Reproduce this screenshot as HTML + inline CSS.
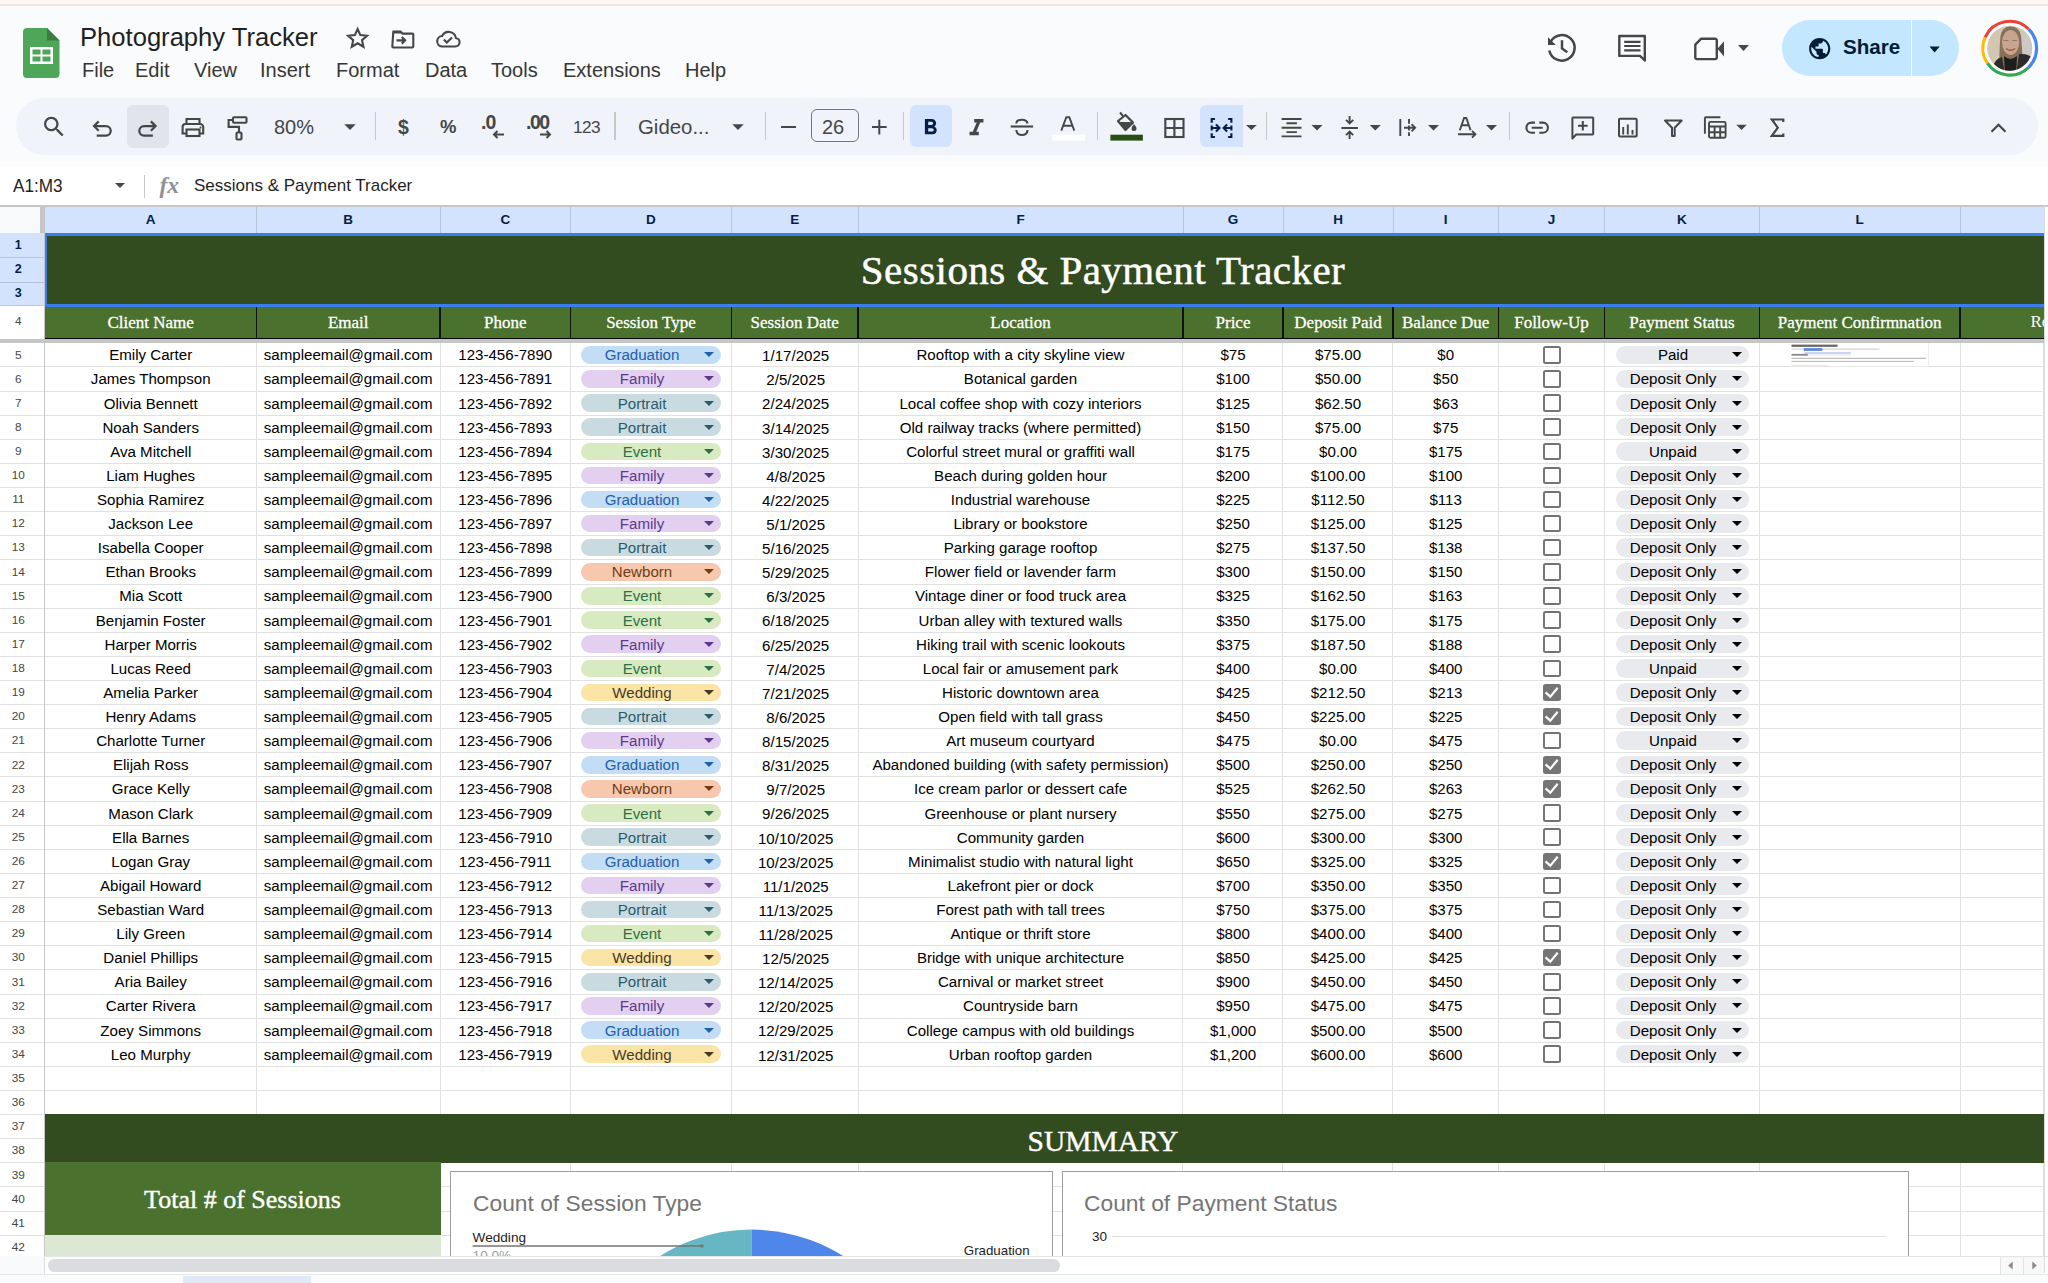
<!DOCTYPE html><html><head><meta charset="utf-8"><style>
*{margin:0;padding:0;box-sizing:border-box}
html,body{width:2048px;height:1283px;overflow:hidden;background:#f9fbfd;position:relative;font-family:"Liberation Sans",sans-serif}
.a{position:absolute}
.t{position:absolute;white-space:nowrap;line-height:1}
.c{position:absolute;white-space:nowrap;font-size:15.1px;color:#000;text-align:center;line-height:17px}
.g{position:absolute;background:#e1e1e1}
.chip{position:absolute;border-radius:9px;height:17.5px}
.arr{position:absolute;width:0;height:0;border-left:5px solid transparent;border-right:5px solid transparent;border-top:5px solid}
.ic{position:absolute}
</style></head><body>
<div class="a" style="left:0;top:0;width:2048px;height:4px;background:#fef7f3"></div>
<div class="a" style="left:0;top:4px;width:2048px;height:1.8px;background:#f4e2de"></div>
<svg class="ic" style="left:23px;top:28px" width="37" height="50" viewBox="0 0 37 50">
<path d="M4 0H24L36.5 12.5V46Q36.5 50 32.5 50H4Q0 50 0 46V4Q0 0 4 0Z" fill="#4ea758"/>
<path d="M24 0V12.5H36.5Z" fill="#3a7d43"/>
<rect x="7" y="19" width="23" height="17" fill="#fff"/>
<rect x="9.5" y="21.5" width="8" height="5" fill="#4ea758"/><rect x="19.5" y="21.5" width="8" height="5" fill="#4ea758"/>
<rect x="9.5" y="28.5" width="8" height="5" fill="#4ea758"/><rect x="19.5" y="28.5" width="8" height="5" fill="#4ea758"/>
</svg>
<div class="t" style="left:80px;top:25.4px;font-size:25.6px;color:#1f1f1f">Photography Tracker</div>
<svg class="ic" style="left:0;top:0" width="500" height="70" viewBox="0 0 500 70"><path d="M357.6 29l2.75 6.1 6.7.65-5.05 4.45 1.45 6.55-5.85-3.45-5.85 3.45 1.45-6.55-5.05-4.45 6.7-.65z" fill="none" stroke="#444746" stroke-width="2.1" stroke-linejoin="miter"/><path d="M393.3 31.6h7.2l2 2h9.8a1 1 0 0 1 1 1v11.9a1 1 0 0 1-1 1h-19a1 1 0 0 1-1-1z" fill="none" stroke="#444746" stroke-width="2.1" stroke-linejoin="round"/><path d="M393 31.6h7.5l2 2H393z" fill="#444746"/><path d="M396.5 40.3h8.5M401.8 37l3.3 3.3-3.3 3.3" fill="none" stroke="#444746" stroke-width="2.2"/><path d="M441.8 46.5h13.5a4.3 4.3 0 0 0 .6-8.55 7.3 7.3 0 0 0-13.8-1.9 5.25 5.25 0 0 0-.3 10.45z" fill="none" stroke="#444746" stroke-width="2.1"/><path d="M443.8 39.6l3 3 5.2-5.2" fill="none" stroke="#444746" stroke-width="2.1"/></svg>
<div class="t" style="left:82px;top:60px;font-size:20px;color:#363636">File</div>
<div class="t" style="left:135px;top:60px;font-size:20px;color:#363636">Edit</div>
<div class="t" style="left:194px;top:60px;font-size:20px;color:#363636">View</div>
<div class="t" style="left:260px;top:60px;font-size:20px;color:#363636">Insert</div>
<div class="t" style="left:336px;top:60px;font-size:20px;color:#363636">Format</div>
<div class="t" style="left:425px;top:60px;font-size:20px;color:#363636">Data</div>
<div class="t" style="left:491px;top:60px;font-size:20px;color:#363636">Tools</div>
<div class="t" style="left:563px;top:60px;font-size:20px;color:#363636">Extensions</div>
<div class="t" style="left:685px;top:60px;font-size:20px;color:#363636">Help</div>
<svg class="ic" style="left:0;top:0" width="2048" height="90" viewBox="0 0 2048 90"><g fill="none" stroke="#444746" stroke-width="2.5"><path d="M1550.7 41.5A12.8 12.8 0 1 1 1549.3 50.5"/><path d="M1562 40.2v8.2l5.3 3.9"/></g><path d="M1548 37.2l0 7.8 7.8 0z" fill="#444746"/><g fill="none" stroke="#444746" stroke-width="2.4" stroke-linejoin="round"><path d="M1619.3 36h25.5v24.5l-4.8-4.6h-20.7z"/></g><g stroke="#444746" stroke-width="2.2"><path d="M1624.2 41.9h16.3M1624.2 46h16.3M1624.2 50.3h16.3"/></g><path d="M1701 38.8h14.3a1.5 1.5 0 0 1 1.5 1.5v17.3a1.5 1.5 0 0 1-1.5 1.5h-18.5a1.5 1.5 0 0 1-1.5-1.5v-13z" fill="none" stroke="#444746" stroke-width="2.4" stroke-linejoin="round"/><path d="M1717.5 48.8l6.5-7.6v15.3z" fill="#444746"/><path d="M1738 44.9h11l-5.5 6z" fill="#444746"/></svg>
<div class="a" style="left:1782px;top:19.8px;width:177px;height:56.7px;border-radius:28.4px;background:#c2e7ff"></div>
<div class="a" style="left:1910.5px;top:19.8px;width:1.5px;height:56.7px;background:#f9fbfd"></div>
<svg class="ic" style="left:1806.5px;top:35.5px" width="25.4" height="25.4" viewBox="0 0 24 24"><path d="M12 2C6.48 2 2 6.48 2 12s4.48 10 10 10 10-4.48 10-10S17.52 2 12 2zm-1 17.93c-3.950-.49-7-3.85-7-7.93 0-.62.08-1.21.21-1.79L9 15v1c0 1.1.9 2 2 2v1.93zm6.9-2.54c-.26-.81-1-1.390-1.9-1.39h-1v-3c0-.55-.45-1-1-1H8v-2h2c.55 0 1-.45 1-1V7h2c1.1 0 2-.9 2-2v-.41c2.93 1.19 5 4.06 5 7.41 0 2.08-.8 3.97-2.1 5.39z" fill="#001d35"/></svg>
<div class="t" style="left:1843px;top:36.8px;font-size:20.6px;font-weight:bold;color:#001d35">Share</div>
<svg class="ic" style="left:0;top:0" width="2048" height="90" viewBox="0 0 2048 90"><path d="M1929.5 46.4h10.2l-5.1 6z" fill="#001d35"/><path d="M1985.13 37.26A26.9 26.9 0 0 1 2028.72 29.18" fill="none" stroke="#ea4335" stroke-width="3.1"/><path d="M2028.72 29.18A26.9 26.9 0 0 1 2028.39 67.55" fill="none" stroke="#4285f4" stroke-width="3.1"/><path d="M2028.39 67.55A26.9 26.9 0 0 1 1987.40 63.24" fill="none" stroke="#34a853" stroke-width="3.1"/><path d="M1987.40 63.24A26.9 26.9 0 0 1 1985.13 37.26" fill="none" stroke="#fbbc04" stroke-width="3.1"/><clipPath id="av"><circle cx="2009.7" cy="48.2" r="22.45"/></clipPath><g clip-path="url(#av)"><rect x="1985" y="24" width="50" height="50" fill="#d3c6b3"/><rect x="2022" y="24" width="14" height="50" fill="#cdc8c1"/><path d="M1999.5 72 Q1999 50 2000.5 36 Q2002 26.5 2010.5 26.5 Q2019.5 26.5 2021 36 Q2022.8 52 2022.5 72z" fill="#87705a"/><path d="M1990 75 Q1993 59 2002 57 L2005 75z" fill="#2b2b2b"/><path d="M2016 75 L2019 54 Q2030 53 2034 60 L2034 75z" fill="#2b2b2b"/><path d="M2004 56 Q2010.5 62 2017 56 L2016 75 H2005z" fill="#1d1d1d"/><ellipse cx="2010.6" cy="42.5" rx="8.6" ry="12.5" fill="#c9a48e"/><path d="M2003.5 40.5h5M2012 40.5h5" stroke="#8d7a6a" stroke-width="1"/><path d="M2006 48.5q4.6 3.5 9.2 0" stroke="#9b5e48" stroke-width="1.3" fill="none"/></g></svg>
<div class="a" style="left:16px;top:98px;width:2022px;height:57px;border-radius:28.5px;background:#f0f3f9"></div>
<div class="a" style="left:126.5px;top:105px;width:42.5px;height:42.5px;border-radius:6px;background:#e1e4ea"></div>
<div class="a" style="left:909.9px;top:105px;width:42.4px;height:42.3px;border-radius:6px;background:#d3e3fd"></div>
<div class="a" style="left:1200.4px;top:105px;width:42.8px;height:42.3px;border-radius:6px 0 0 6px;background:#d3e3fd"></div>
<div class="a" style="left:374.8px;top:112.3px;width:1.4px;height:27.5px;background:#c7c7c7"></div>
<div class="a" style="left:614.3px;top:112.3px;width:1.4px;height:27.5px;background:#c7c7c7"></div>
<div class="a" style="left:764.8px;top:112.3px;width:1.4px;height:27.5px;background:#c7c7c7"></div>
<div class="a" style="left:902.8px;top:112.3px;width:1.4px;height:27.5px;background:#c7c7c7"></div>
<div class="a" style="left:1097.1px;top:112.3px;width:1.4px;height:27.5px;background:#c7c7c7"></div>
<div class="a" style="left:1265.9px;top:112.3px;width:1.4px;height:27.5px;background:#c7c7c7"></div>
<div class="a" style="left:1508.8px;top:112.3px;width:1.4px;height:27.5px;background:#c7c7c7"></div>
<svg class="ic" style="left:0;top:0" width="2048" height="166" viewBox="0 0 2048 166"><path transform="translate(40.71 113.51) scale(1.114)" d="M15.5 14h-.79l-.28-.27C15.41 12.59 16 11.11 16 9.5 16 5.91 13.09 3 9.5 3S3 5.91 3 9.5 5.91 16 9.5 16c1.61 0 3.09-.59 4.23-1.57l.27.28v.79l5 4.99L20.49 19l-4.99-5zm-6 0C7.01 14 5 11.99 5 9.5S7.01 5 9.5 5 14 7.01 14 9.5 11.99 14 9.5 14z" fill="#444746"/><g fill="none" stroke="#444746" stroke-width="2.2"><path d="M98.7 121.4l-4.7 4.7 4.7 4.7"/><path d="M94.6 126.1H106a4.75 4.75 0 0 1 0 9.5h-9.3"/></g><g fill="none" stroke="#444746" stroke-width="2.2"><path d="M150.9 121.4l4.7 4.7-4.7 4.7"/><path d="M155 126.1H144.05a4.75 4.75 0 0 0 0 9.5h8.85"/></g><g fill="none" stroke="#444746" stroke-width="2.1"><path d="M186.5 123.5v-4.5h13v4.5"/><path d="M186.2 133.5h-3.6v-6.5a3 3 0 0 1 3-3h14.6a3 3 0 0 1 3 3v6.5h-3.6"/><rect x="186.5" y="129.5" width="13" height="6.5"/></g><circle cx="200.5" cy="127.5" r="1" fill="#444746"/><g fill="none" stroke="#444746" stroke-width="2.1"><rect x="233" y="117.3" width="13.5" height="5.5" rx="1"/><path d="M233 120H228.6v6.9h10.4v5.4"/><rect x="236.5" y="132.5" width="5" height="7" rx="1"/></g><path d="M344.25 124.3h11.5l-5.75 5.8z" fill="#444746"/><g fill="none" stroke="#444746" stroke-width="2"><path d="M504 134.5h-10M497.5 131l-3.5 3.5 3.5 3.5"/></g><g fill="none" stroke="#444746" stroke-width="2"><path d="M540 134.5h10M546.5 131l3.5 3.5-3.5 3.5"/></g><path d="M732.25 124.3h11.5l-5.75 5.8z" fill="#444746"/><path d="M781 127h15" stroke="#444746" stroke-width="2"/><path d="M872 127h14.7M879.3 119.7v14.7" stroke="#444746" stroke-width="2"/><path transform="translate(917.19 114.55) scale(1.1)" d="M15.6 10.79c.97-.67 1.65-1.77 1.65-2.79 0-2.26-1.75-4-4-4H7v14h7.04c2.09 0 3.71-1.7 3.71-3.79 0-1.52-.86-2.82-2.15-3.42zM10 6.5h3c.83 0 1.5.67 1.5 1.5s-.67 1.5-1.5 1.5h-3v-3zm3.5 9H10v-3h3.5c.83 0 1.5.67 1.5 1.5s-.67 1.5-1.5 1.5z" fill="#041e49"/><path transform="translate(962.58 114.34) scale(1.16)" d="M10 4v3h2.21l-3.42 8H6v3h8v-3h-2.21l3.42-8H18V4z" fill="#444746"/><g fill="none" stroke="#444746" stroke-width="2.1"><path d="M1010.7 126.5h22.4"/><path d="M1027.5 123.5q-.5-3.7-5.6-3.7-5.6 0-5.6 3.7"/><path d="M1016.3 130q.3 5 5.6 5 5.4 0 5.6-5"/></g><path d="M1061.3 130.7l5-13.5h3l5 13.5M1063.3 125.8h9" fill="none" stroke="#444746" stroke-width="1.9"/><rect x="1052.2" y="134.7" width="32.9" height="5.9" fill="#fff"/><g transform="translate(1115.5 111.5)"><path d="M4.5 1l3 3.5" stroke="#444746" stroke-width="2" fill="none"/><path d="M2.5 9.5l7.5-6 7.5 7.5-7.5 7.5z" fill="none" stroke="#444746" stroke-width="2.2" stroke-linejoin="round"/><path d="M3 10.5h14l-7 7z" fill="#444746"/><path d="M18.5 12.5q2.5 3 2.5 4.5a2.5 2.5 0 0 1-5 0q0-1.5 2.5-4.5z" fill="#444746"/></g><rect x="1110.4" y="134.7" width="32.5" height="5.9" fill="#274e13"/><g fill="none" stroke="#444746" stroke-width="2.1"><rect x="1165.3" y="119" width="18.2" height="18"/><path d="M1174.4 119v18M1165.3 128h18.2"/></g><g fill="none" stroke="#041e49" stroke-width="2.1"><path d="M1215 119h-3.3v3.8M1211.7 133.2v3.8h3.3M1228.1 119h3.3v3.8M1231.4 133.2v3.8h-3.3"/><path d="M1211.7 128h7.5M1216 124.5l3.5 3.5-3.5 3.5M1231.4 128h-7.5M1227.1 124.5l-3.5 3.5 3.5 3.5"/><path d="M1211.7 125.5v5M1231.4 125.5v5"/></g><path d="M1246 124.9h10.8l-5.4 5.2z" fill="#444746"/><g stroke="#444746" stroke-width="1.9"><path d="M1281.6 119h19.9M1286.5 123.2h10.4M1281.6 127.8h19.9M1286.5 132.1h10.4M1281.6 136.4h19.9"/></g><path d="M1311.5 124.95h11l-5.5 5.5z" fill="#444746"/><g fill="none" stroke="#444746" stroke-width="1.9"><path d="M1341.4 128h16.5M1349.6 115.9v7.5M1346 119.8l3.6 3.6 3.6-3.6M1349.6 139v-7.5M1346 135.1l3.6-3.6 3.6 3.6"/></g><path d="M1369.8 124.95h11l-5.5 5.5z" fill="#444746"/><g fill="none" stroke="#444746" stroke-width="1.9"><path d="M1400.3 118.9v17.1M1409 118.9v4.8M1409 125.5v5M1409 132.3v3.7M1404 127.8h11M1411.5 124.2l3.6 3.6-3.6 3.6"/></g><path d="M1428 124.95h11l-5.5 5.5z" fill="#444746"/><g fill="none" stroke="#444746" stroke-width="1.9"><path d="M1459.8 130.2l4.3-12.2h2.2l4.3 12.2M1461.6 125.3h7.4M1458 134.2h17M1472 130.8l3.4 3.4-3.4 3.4"/></g><path d="M1486 124.95h11l-5.5 5.5z" fill="#444746"/><g fill="none" stroke="#444746" stroke-width="2.1"><path d="M1535 122.6h-3.5a5.1 5.1 0 0 0 0 10.2h3.5M1539.3 122.6h3.5a5.1 5.1 0 0 1 0 10.2h-3.5M1531.7 127.7h11"/></g><g fill="none" stroke="#444746" stroke-width="2"><path d="M1572.4 138.5V118.2a.7.7 0 0 1 .7-.7h19.4a.7.7 0 0 1 .7.7v15.6a.7.7 0 0 1-.7.7h-16.3z" stroke-linejoin="round"/><path d="M1582.8 121v9.6M1578 125.8h9.6"/></g><g fill="none" stroke="#444746" stroke-width="2"><rect x="1619" y="118.8" width="17.7" height="17.8" rx="1"/></g><g stroke="#444746" stroke-width="1.9"><path d="M1623.2 134.5v-7.5M1627.8 134.5v-10M1632.5 134.5v-4.5"/></g><g fill="none" stroke="#444746" stroke-width="2"><path d="M1665 120.5h16.7l-7 7.3v8.1h-2.7v-8.1z" stroke-linejoin="round"/></g><g fill="none" stroke="#444746" stroke-width="1.9"><path d="M1704.9 133.8v-15.5a1 1 0 0 1 1-1h14.5"/><rect x="1709" y="121.9" width="16.6" height="15.9" rx="1.5"/><path d="M1709 126.5h16.6M1709 132.2h16.6M1714.6 126.5v11.3M1720.2 126.5v11.3"/></g><path d="M1736.3 124.85h10.4l-5.2 5.1z" fill="#444746"/><path d="M1783.3 122v-2.5h-11.5l6 8.2-6 8.2h11.5v-2.5" fill="none" stroke="#444746" stroke-width="2.2"/><path d="M1991.5 131.7l7-7 7 7" fill="none" stroke="#444746" stroke-width="2.2"/></svg>
<div class="t" style="left:274px;top:117px;font-size:20px;color:#444746">80%</div>
<div class="t" style="left:398px;top:117.5px;font-size:19.5px;font-weight:bold;color:#444746">$</div>
<div class="t" style="left:440px;top:118px;font-size:18.5px;font-weight:bold;color:#444746">%</div>
<div class="t" style="left:481px;top:112.5px;font-size:19.5px;font-weight:bold;color:#444746;letter-spacing:-1px">.0</div>
<div class="t" style="left:526px;top:112.5px;font-size:19.5px;font-weight:bold;color:#444746;letter-spacing:-1.5px">.00</div>
<div class="t" style="left:573px;top:118.5px;font-size:17.2px;color:#444746;letter-spacing:-.5px">123</div>
<div class="t" style="left:638px;top:116.5px;font-size:20.4px;color:#444746">Gideo...</div>
<div class="a" style="left:810.5px;top:109.3px;width:48px;height:33.2px;border:1.5px solid #747775;border-radius:6px"></div>
<div class="t" style="left:822px;top:117px;font-size:20px;color:#444746">26</div>
<div class="a" style="left:0;top:166px;width:2048px;height:40px;background:#fff"></div>
<div class="t" style="left:13px;top:177.5px;font-size:17.2px;color:#1f1f1f;transform:scaleY(1.06);transform-origin:0 100%">A1:M3</div>
<div class="arr" style="left:115px;top:183px;border-top-color:#444746;border-left-width:5.5px;border-right-width:5.5px;border-top-width:5.5px"></div>
<div class="a" style="left:143.5px;top:175px;width:1.5px;height:23px;background:#c7c7c7"></div>
<div class="t" style="left:159.5px;top:174px;font-size:23.5px;font-style:italic;font-weight:bold;color:#8e9196;font-family:Liberation Serif">fx</div>
<div class="t" style="left:194px;top:176.5px;font-size:17px;color:#1f1f1f">Sessions &amp; Payment Tracker</div>
<div class="a" style="left:0;top:206px;width:2048px;height:1050px;background:#fff"></div>
<div class="a" style="left:0;top:205px;width:2048px;height:1.5px;background:#c7c7c7"></div>
<div class="a" style="left:45px;top:206.5px;width:1998.6px;height:26.8px;background:#d3e3fd"></div>
<div class="a" style="left:0;top:206.5px;width:40px;height:26.8px;background:#f8f9fa"></div>
<div class="a" style="left:40px;top:206.5px;width:5px;height:26.8px;background:#c4c7c5"></div>
<div class="a" style="left:0;top:233.3px;width:44px;height:72px;background:#d3e3fd"></div>
<div class="t" style="left:45px;top:213px;width:211.4px;text-align:center;font-size:13.5px;font-weight:bold;color:#041e49">A</div>
<div class="a" style="left:255.9px;top:206.5px;width:1px;height:27px;background:#b7c4d9"></div>
<div class="t" style="left:256.4px;top:213px;width:183.6px;text-align:center;font-size:13.5px;font-weight:bold;color:#041e49">B</div>
<div class="a" style="left:439.5px;top:206.5px;width:1px;height:27px;background:#b7c4d9"></div>
<div class="t" style="left:440px;top:213px;width:130.5px;text-align:center;font-size:13.5px;font-weight:bold;color:#041e49">C</div>
<div class="a" style="left:570px;top:206.5px;width:1px;height:27px;background:#b7c4d9"></div>
<div class="t" style="left:570.5px;top:213px;width:160.9px;text-align:center;font-size:13.5px;font-weight:bold;color:#041e49">D</div>
<div class="a" style="left:730.9px;top:206.5px;width:1px;height:27px;background:#b7c4d9"></div>
<div class="t" style="left:731.4px;top:213px;width:126.6px;text-align:center;font-size:13.5px;font-weight:bold;color:#041e49">E</div>
<div class="a" style="left:857.5px;top:206.5px;width:1px;height:27px;background:#b7c4d9"></div>
<div class="t" style="left:858px;top:213px;width:325px;text-align:center;font-size:13.5px;font-weight:bold;color:#041e49">F</div>
<div class="a" style="left:1182.5px;top:206.5px;width:1px;height:27px;background:#b7c4d9"></div>
<div class="t" style="left:1183px;top:213px;width:100px;text-align:center;font-size:13.5px;font-weight:bold;color:#041e49">G</div>
<div class="a" style="left:1282.5px;top:206.5px;width:1px;height:27px;background:#b7c4d9"></div>
<div class="t" style="left:1283px;top:213px;width:110px;text-align:center;font-size:13.5px;font-weight:bold;color:#041e49">H</div>
<div class="a" style="left:1392.5px;top:206.5px;width:1px;height:27px;background:#b7c4d9"></div>
<div class="t" style="left:1393px;top:213px;width:105.4px;text-align:center;font-size:13.5px;font-weight:bold;color:#041e49">I</div>
<div class="a" style="left:1497.9px;top:206.5px;width:1px;height:27px;background:#b7c4d9"></div>
<div class="t" style="left:1498.4px;top:213px;width:106.2px;text-align:center;font-size:13.5px;font-weight:bold;color:#041e49">J</div>
<div class="a" style="left:1604.1px;top:206.5px;width:1px;height:27px;background:#b7c4d9"></div>
<div class="t" style="left:1604.6px;top:213px;width:154.8px;text-align:center;font-size:13.5px;font-weight:bold;color:#041e49">K</div>
<div class="a" style="left:1758.9px;top:206.5px;width:1px;height:27px;background:#b7c4d9"></div>
<div class="t" style="left:1759.4px;top:213px;width:200.6px;text-align:center;font-size:13.5px;font-weight:bold;color:#041e49">L</div>
<div class="a" style="left:1959.5px;top:206.5px;width:1px;height:27px;background:#b7c4d9"></div>
<div class="g" style="left:256px;top:343px;width:1px;height:913px"></div>
<div class="g" style="left:440px;top:343px;width:1px;height:913px"></div>
<div class="g" style="left:570px;top:343px;width:1px;height:913px"></div>
<div class="g" style="left:731px;top:343px;width:1px;height:913px"></div>
<div class="g" style="left:858px;top:343px;width:1px;height:913px"></div>
<div class="g" style="left:1182px;top:343px;width:1px;height:913px"></div>
<div class="g" style="left:1282px;top:343px;width:1px;height:913px"></div>
<div class="g" style="left:1392px;top:343px;width:1px;height:913px"></div>
<div class="g" style="left:1498px;top:343px;width:1px;height:913px"></div>
<div class="g" style="left:1604px;top:343px;width:1px;height:913px"></div>
<div class="g" style="left:1759px;top:343px;width:1px;height:913px"></div>
<div class="g" style="left:1960px;top:343px;width:1px;height:913px"></div>
<div class="g" style="left:2043px;top:343px;width:1px;height:913px"></div>
<div class="g" style="left:0;top:366px;width:2044px;height:1px"></div>
<div class="g" style="left:0;top:391px;width:2044px;height:1px"></div>
<div class="g" style="left:0;top:415px;width:2044px;height:1px"></div>
<div class="g" style="left:0;top:439px;width:2044px;height:1px"></div>
<div class="g" style="left:0;top:463px;width:2044px;height:1px"></div>
<div class="g" style="left:0;top:487px;width:2044px;height:1px"></div>
<div class="g" style="left:0;top:511px;width:2044px;height:1px"></div>
<div class="g" style="left:0;top:535px;width:2044px;height:1px"></div>
<div class="g" style="left:0;top:559px;width:2044px;height:1px"></div>
<div class="g" style="left:0;top:584px;width:2044px;height:1px"></div>
<div class="g" style="left:0;top:608px;width:2044px;height:1px"></div>
<div class="g" style="left:0;top:632px;width:2044px;height:1px"></div>
<div class="g" style="left:0;top:656px;width:2044px;height:1px"></div>
<div class="g" style="left:0;top:680px;width:2044px;height:1px"></div>
<div class="g" style="left:0;top:704px;width:2044px;height:1px"></div>
<div class="g" style="left:0;top:728px;width:2044px;height:1px"></div>
<div class="g" style="left:0;top:752px;width:2044px;height:1px"></div>
<div class="g" style="left:0;top:776px;width:2044px;height:1px"></div>
<div class="g" style="left:0;top:801px;width:2044px;height:1px"></div>
<div class="g" style="left:0;top:825px;width:2044px;height:1px"></div>
<div class="g" style="left:0;top:849px;width:2044px;height:1px"></div>
<div class="g" style="left:0;top:873px;width:2044px;height:1px"></div>
<div class="g" style="left:0;top:897px;width:2044px;height:1px"></div>
<div class="g" style="left:0;top:921px;width:2044px;height:1px"></div>
<div class="g" style="left:0;top:945px;width:2044px;height:1px"></div>
<div class="g" style="left:0;top:969px;width:2044px;height:1px"></div>
<div class="g" style="left:0;top:994px;width:2044px;height:1px"></div>
<div class="g" style="left:0;top:1018px;width:2044px;height:1px"></div>
<div class="g" style="left:0;top:1042px;width:2044px;height:1px"></div>
<div class="g" style="left:0;top:1066px;width:2044px;height:1px"></div>
<div class="g" style="left:0;top:1090px;width:2044px;height:1px"></div>
<div class="g" style="left:0;top:1114px;width:2044px;height:1px"></div>
<div class="g" style="left:0;top:1138px;width:2044px;height:1px"></div>
<div class="g" style="left:0;top:1162px;width:2044px;height:1px"></div>
<div class="g" style="left:0;top:1186px;width:2044px;height:1px"></div>
<div class="g" style="left:0;top:1211px;width:2044px;height:1px"></div>
<div class="g" style="left:0;top:1235px;width:2044px;height:1px"></div>
<div class="g" style="left:0;top:1259px;width:2044px;height:1px"></div>
<div class="a" style="left:44px;top:233px;width:1.2px;height:1040px;background:#c7c7c7"></div>
<div class="a" style="left:0;top:257.4px;width:44px;height:1px;background:#b7c4d9"></div>
<div class="a" style="left:0;top:281.5px;width:44px;height:1px;background:#b7c4d9"></div>
<div class="a" style="left:0;top:305.2px;width:44px;height:1.2px;background:#c7c7c7"></div>
<div class="a" style="left:0;top:338.9px;width:2044px;height:4.4px;background:#c4c7c5"></div>
<div class="a" style="left:45px;top:233px;width:1999px;height:74px;background:#324b1f"></div>
<div class="a" style="left:45.2px;top:232.7px;width:1999px;height:74.2px;border:3px solid #3b7ded;border-left-width:2px;border-right:none"></div>
<div class="t" style="left:45px;top:248px;width:2116px;text-align:center;font-family:'Liberation Serif',serif;font-size:41px;color:#fff;margin-top:2px;letter-spacing:0.45px;-webkit-text-stroke:0.5px #fff">Sessions &amp; Payment Tracker</div>
<div class="a" style="left:45px;top:306.9px;width:1999px;height:31px;background:#4a712d"></div>
<div class="a" style="left:45px;top:337.7px;width:1999px;height:1.3px;background:#000"></div>
<div class="t" style="left:45px;top:314px;width:211.4px;text-align:center;font-family:'Liberation Serif',serif;font-size:17px;color:#fff;-webkit-text-stroke:0.3px #fff">Client Name</div>
<div class="a" style="left:255.65px;top:306.9px;width:1.5px;height:31px;background:#111"></div>
<div class="t" style="left:256.4px;top:314px;width:183.6px;text-align:center;font-family:'Liberation Serif',serif;font-size:17px;color:#fff;-webkit-text-stroke:0.3px #fff">Email</div>
<div class="a" style="left:439.25px;top:306.9px;width:1.5px;height:31px;background:#111"></div>
<div class="t" style="left:440px;top:314px;width:130.5px;text-align:center;font-family:'Liberation Serif',serif;font-size:17px;color:#fff;-webkit-text-stroke:0.3px #fff">Phone</div>
<div class="a" style="left:569.75px;top:306.9px;width:1.5px;height:31px;background:#111"></div>
<div class="t" style="left:570.5px;top:314px;width:160.9px;text-align:center;font-family:'Liberation Serif',serif;font-size:17px;color:#fff;-webkit-text-stroke:0.3px #fff">Session Type</div>
<div class="a" style="left:730.65px;top:306.9px;width:1.5px;height:31px;background:#111"></div>
<div class="t" style="left:731.4px;top:314px;width:126.6px;text-align:center;font-family:'Liberation Serif',serif;font-size:17px;color:#fff;-webkit-text-stroke:0.3px #fff">Session Date</div>
<div class="a" style="left:857.25px;top:306.9px;width:1.5px;height:31px;background:#111"></div>
<div class="t" style="left:858px;top:314px;width:325px;text-align:center;font-family:'Liberation Serif',serif;font-size:17px;color:#fff;-webkit-text-stroke:0.3px #fff">Location</div>
<div class="a" style="left:1182.25px;top:306.9px;width:1.5px;height:31px;background:#111"></div>
<div class="t" style="left:1183px;top:314px;width:100px;text-align:center;font-family:'Liberation Serif',serif;font-size:17px;color:#fff;-webkit-text-stroke:0.3px #fff">Price</div>
<div class="a" style="left:1282.25px;top:306.9px;width:1.5px;height:31px;background:#111"></div>
<div class="t" style="left:1283px;top:314px;width:110px;text-align:center;font-family:'Liberation Serif',serif;font-size:17px;color:#fff;-webkit-text-stroke:0.3px #fff">Deposit Paid</div>
<div class="a" style="left:1392.25px;top:306.9px;width:1.5px;height:31px;background:#111"></div>
<div class="t" style="left:1393px;top:314px;width:105.4px;text-align:center;font-family:'Liberation Serif',serif;font-size:17px;color:#fff;-webkit-text-stroke:0.3px #fff">Balance Due</div>
<div class="a" style="left:1497.65px;top:306.9px;width:1.5px;height:31px;background:#111"></div>
<div class="t" style="left:1498.4px;top:314px;width:106.2px;text-align:center;font-family:'Liberation Serif',serif;font-size:17px;color:#fff;-webkit-text-stroke:0.3px #fff">Follow-Up</div>
<div class="a" style="left:1603.85px;top:306.9px;width:1.5px;height:31px;background:#111"></div>
<div class="t" style="left:1604.6px;top:314px;width:154.8px;text-align:center;font-family:'Liberation Serif',serif;font-size:17px;color:#fff;-webkit-text-stroke:0.3px #fff">Payment Status</div>
<div class="a" style="left:1758.65px;top:306.9px;width:1.5px;height:31px;background:#111"></div>
<div class="t" style="left:1759.4px;top:314px;width:200.6px;text-align:center;font-family:'Liberation Serif',serif;font-size:17px;color:#fff;-webkit-text-stroke:0.3px #fff">Payment Confirmnation</div>
<div class="a" style="left:1959.25px;top:306.9px;width:1.5px;height:31px;background:#111"></div>
<div class="a" style="left:1960px;top:305.5px;width:84px;height:32.6px;overflow:hidden"><div class="t" style="left:70.5px;top:7px;font-family:'Liberation Serif',serif;font-size:17px;color:#fff">Receipt</div></div>
<div class="t" style="left:0;top:239.05px;width:36.5px;text-align:center;font-size:12.5px;font-weight:bold;color:#041e49">1</div>
<div class="t" style="left:0;top:263.15px;width:36.5px;text-align:center;font-size:12.5px;font-weight:bold;color:#041e49">2</div>
<div class="t" style="left:0;top:287.05px;width:36.5px;text-align:center;font-size:12.5px;font-weight:bold;color:#041e49">3</div>
<div class="t" style="left:0;top:316.25px;width:36.5px;text-align:center;font-size:11.8px;color:#444746">4</div>
<div class="t" style="left:0;top:349.6px;width:36.5px;text-align:center;font-size:11.8px;color:#444746">5</div>
<div class="t" style="left:0;top:373.66px;width:36.5px;text-align:center;font-size:11.8px;color:#444746">6</div>
<div class="t" style="left:0;top:397.78px;width:36.5px;text-align:center;font-size:11.8px;color:#444746">7</div>
<div class="t" style="left:0;top:421.89px;width:36.5px;text-align:center;font-size:11.8px;color:#444746">8</div>
<div class="t" style="left:0;top:446.01px;width:36.5px;text-align:center;font-size:11.8px;color:#444746">9</div>
<div class="t" style="left:0;top:470.13px;width:36.5px;text-align:center;font-size:11.8px;color:#444746">10</div>
<div class="t" style="left:0;top:494.24px;width:36.5px;text-align:center;font-size:11.8px;color:#444746">11</div>
<div class="t" style="left:0;top:518.36px;width:36.5px;text-align:center;font-size:11.8px;color:#444746">12</div>
<div class="t" style="left:0;top:542.48px;width:36.5px;text-align:center;font-size:11.8px;color:#444746">13</div>
<div class="t" style="left:0;top:566.59px;width:36.5px;text-align:center;font-size:11.8px;color:#444746">14</div>
<div class="t" style="left:0;top:590.71px;width:36.5px;text-align:center;font-size:11.8px;color:#444746">15</div>
<div class="t" style="left:0;top:614.83px;width:36.5px;text-align:center;font-size:11.8px;color:#444746">16</div>
<div class="t" style="left:0;top:638.95px;width:36.5px;text-align:center;font-size:11.8px;color:#444746">17</div>
<div class="t" style="left:0;top:663.06px;width:36.5px;text-align:center;font-size:11.8px;color:#444746">18</div>
<div class="t" style="left:0;top:687.18px;width:36.5px;text-align:center;font-size:11.8px;color:#444746">19</div>
<div class="t" style="left:0;top:711.3px;width:36.5px;text-align:center;font-size:11.8px;color:#444746">20</div>
<div class="t" style="left:0;top:735.41px;width:36.5px;text-align:center;font-size:11.8px;color:#444746">21</div>
<div class="t" style="left:0;top:759.53px;width:36.5px;text-align:center;font-size:11.8px;color:#444746">22</div>
<div class="t" style="left:0;top:783.65px;width:36.5px;text-align:center;font-size:11.8px;color:#444746">23</div>
<div class="t" style="left:0;top:807.76px;width:36.5px;text-align:center;font-size:11.8px;color:#444746">24</div>
<div class="t" style="left:0;top:831.88px;width:36.5px;text-align:center;font-size:11.8px;color:#444746">25</div>
<div class="t" style="left:0;top:856px;width:36.5px;text-align:center;font-size:11.8px;color:#444746">26</div>
<div class="t" style="left:0;top:880.12px;width:36.5px;text-align:center;font-size:11.8px;color:#444746">27</div>
<div class="t" style="left:0;top:904.23px;width:36.5px;text-align:center;font-size:11.8px;color:#444746">28</div>
<div class="t" style="left:0;top:928.35px;width:36.5px;text-align:center;font-size:11.8px;color:#444746">29</div>
<div class="t" style="left:0;top:952.47px;width:36.5px;text-align:center;font-size:11.8px;color:#444746">30</div>
<div class="t" style="left:0;top:976.58px;width:36.5px;text-align:center;font-size:11.8px;color:#444746">31</div>
<div class="t" style="left:0;top:1000.7px;width:36.5px;text-align:center;font-size:11.8px;color:#444746">32</div>
<div class="t" style="left:0;top:1024.82px;width:36.5px;text-align:center;font-size:11.8px;color:#444746">33</div>
<div class="t" style="left:0;top:1048.93px;width:36.5px;text-align:center;font-size:11.8px;color:#444746">34</div>
<div class="t" style="left:0;top:1073.05px;width:36.5px;text-align:center;font-size:11.8px;color:#444746">35</div>
<div class="t" style="left:0;top:1097.17px;width:36.5px;text-align:center;font-size:11.8px;color:#444746">36</div>
<div class="t" style="left:0;top:1121.29px;width:36.5px;text-align:center;font-size:11.8px;color:#444746">37</div>
<div class="t" style="left:0;top:1145.4px;width:36.5px;text-align:center;font-size:11.8px;color:#444746">38</div>
<div class="t" style="left:0;top:1169.52px;width:36.5px;text-align:center;font-size:11.8px;color:#444746">39</div>
<div class="t" style="left:0;top:1193.64px;width:36.5px;text-align:center;font-size:11.8px;color:#444746">40</div>
<div class="t" style="left:0;top:1217.75px;width:36.5px;text-align:center;font-size:11.8px;color:#444746">41</div>
<div class="t" style="left:0;top:1241.87px;width:36.5px;text-align:center;font-size:11.8px;color:#444746">42</div>
<div class="c" style="left:45px;top:346.3px;width:211.4px;color:#000">Emily Carter</div>
<div class="c" style="left:256.4px;top:346.3px;width:183.6px;color:#000">sampleemail@gmail.com</div>
<div class="c" style="left:440px;top:346.3px;width:130.5px;color:#000">123-456-7890</div>
<div class="chip" style="left:581px;top:346.05px;width:140px;background:#c2ddf4"></div>
<div class="c" style="left:581px;top:346.3px;width:122px;color:#2160ad">Graduation</div>
<div class="arr" style="left:704px;top:352.3px;border-top-color:#2160ad;border-left-width:5px;border-right-width:5px;border-top-width:5px"></div>
<div class="c" style="left:732.4px;top:347.2px;width:126.6px;color:#000">1/17/2025</div>
<div class="c" style="left:858px;top:346.3px;width:325px;color:#000">Rooftop with a city skyline view</div>
<div class="c" style="left:1183px;top:346.3px;width:100px;color:#000">$75</div>
<div class="c" style="left:1283px;top:346.3px;width:110px;color:#000">$75.00</div>
<div class="c" style="left:1393px;top:346.3px;width:105.4px;color:#000">$0</div>
<div class="a" style="left:1543px;top:346.05px;width:17.5px;height:17.5px;border-radius:2.5px;border:2px solid #747474"></div>
<div class="chip" style="left:1616px;top:345.55px;width:133px;height:18.5px;border-radius:9.25px;background:#e8eaed"></div>
<div class="c" style="left:1616px;top:346.3px;width:114px;color:#000">Paid</div>
<div class="arr" style="left:1731.5px;top:352.3px;border-top-color:#000;border-left-width:5px;border-right-width:5px;border-top-width:5px"></div>
<div class="c" style="left:45px;top:370.42px;width:211.4px;color:#000">James Thompson</div>
<div class="c" style="left:256.4px;top:370.42px;width:183.6px;color:#000">sampleemail@gmail.com</div>
<div class="c" style="left:440px;top:370.42px;width:130.5px;color:#000">123-456-7891</div>
<div class="chip" style="left:581px;top:370.17px;width:140px;background:#e3d0f0"></div>
<div class="c" style="left:581px;top:370.42px;width:122px;color:#5a3a8c">Family</div>
<div class="arr" style="left:704px;top:376.42px;border-top-color:#5a3a8c;border-left-width:5px;border-right-width:5px;border-top-width:5px"></div>
<div class="c" style="left:732.4px;top:371.32px;width:126.6px;color:#000">2/5/2025</div>
<div class="c" style="left:858px;top:370.42px;width:325px;color:#000">Botanical garden</div>
<div class="c" style="left:1183px;top:370.42px;width:100px;color:#000">$100</div>
<div class="c" style="left:1283px;top:370.42px;width:110px;color:#000">$50.00</div>
<div class="c" style="left:1393px;top:370.42px;width:105.4px;color:#000">$50</div>
<div class="a" style="left:1543px;top:370.17px;width:17.5px;height:17.5px;border-radius:2.5px;border:2px solid #747474"></div>
<div class="chip" style="left:1616px;top:369.67px;width:133px;height:18.5px;border-radius:9.25px;background:#e8eaed"></div>
<div class="c" style="left:1616px;top:370.42px;width:114px;color:#000">Deposit Only</div>
<div class="arr" style="left:1731.5px;top:376.42px;border-top-color:#000;border-left-width:5px;border-right-width:5px;border-top-width:5px"></div>
<div class="c" style="left:45px;top:394.53px;width:211.4px;color:#000">Olivia Bennett</div>
<div class="c" style="left:256.4px;top:394.53px;width:183.6px;color:#000">sampleemail@gmail.com</div>
<div class="c" style="left:440px;top:394.53px;width:130.5px;color:#000">123-456-7892</div>
<div class="chip" style="left:581px;top:394.28px;width:140px;background:#c9dbe1"></div>
<div class="c" style="left:581px;top:394.53px;width:122px;color:#285c6b">Portrait</div>
<div class="arr" style="left:704px;top:400.53px;border-top-color:#285c6b;border-left-width:5px;border-right-width:5px;border-top-width:5px"></div>
<div class="c" style="left:732.4px;top:395.43px;width:126.6px;color:#000">2/24/2025</div>
<div class="c" style="left:858px;top:394.53px;width:325px;color:#000">Local coffee shop with cozy interiors</div>
<div class="c" style="left:1183px;top:394.53px;width:100px;color:#000">$125</div>
<div class="c" style="left:1283px;top:394.53px;width:110px;color:#000">$62.50</div>
<div class="c" style="left:1393px;top:394.53px;width:105.4px;color:#000">$63</div>
<div class="a" style="left:1543px;top:394.28px;width:17.5px;height:17.5px;border-radius:2.5px;border:2px solid #747474"></div>
<div class="chip" style="left:1616px;top:393.78px;width:133px;height:18.5px;border-radius:9.25px;background:#e8eaed"></div>
<div class="c" style="left:1616px;top:394.53px;width:114px;color:#000">Deposit Only</div>
<div class="arr" style="left:1731.5px;top:400.53px;border-top-color:#000;border-left-width:5px;border-right-width:5px;border-top-width:5px"></div>
<div class="c" style="left:45px;top:418.65px;width:211.4px;color:#000">Noah Sanders</div>
<div class="c" style="left:256.4px;top:418.65px;width:183.6px;color:#000">sampleemail@gmail.com</div>
<div class="c" style="left:440px;top:418.65px;width:130.5px;color:#000">123-456-7893</div>
<div class="chip" style="left:581px;top:418.4px;width:140px;background:#c9dbe1"></div>
<div class="c" style="left:581px;top:418.65px;width:122px;color:#285c6b">Portrait</div>
<div class="arr" style="left:704px;top:424.65px;border-top-color:#285c6b;border-left-width:5px;border-right-width:5px;border-top-width:5px"></div>
<div class="c" style="left:732.4px;top:419.55px;width:126.6px;color:#000">3/14/2025</div>
<div class="c" style="left:858px;top:418.65px;width:325px;color:#000">Old railway tracks (where permitted)</div>
<div class="c" style="left:1183px;top:418.65px;width:100px;color:#000">$150</div>
<div class="c" style="left:1283px;top:418.65px;width:110px;color:#000">$75.00</div>
<div class="c" style="left:1393px;top:418.65px;width:105.4px;color:#000">$75</div>
<div class="a" style="left:1543px;top:418.4px;width:17.5px;height:17.5px;border-radius:2.5px;border:2px solid #747474"></div>
<div class="chip" style="left:1616px;top:417.9px;width:133px;height:18.5px;border-radius:9.25px;background:#e8eaed"></div>
<div class="c" style="left:1616px;top:418.65px;width:114px;color:#000">Deposit Only</div>
<div class="arr" style="left:1731.5px;top:424.65px;border-top-color:#000;border-left-width:5px;border-right-width:5px;border-top-width:5px"></div>
<div class="c" style="left:45px;top:442.77px;width:211.4px;color:#000">Ava Mitchell</div>
<div class="c" style="left:256.4px;top:442.77px;width:183.6px;color:#000">sampleemail@gmail.com</div>
<div class="c" style="left:440px;top:442.77px;width:130.5px;color:#000">123-456-7894</div>
<div class="chip" style="left:581px;top:442.52px;width:140px;background:#d8eac0"></div>
<div class="c" style="left:581px;top:442.77px;width:122px;color:#2c7049">Event</div>
<div class="arr" style="left:704px;top:448.77px;border-top-color:#2c7049;border-left-width:5px;border-right-width:5px;border-top-width:5px"></div>
<div class="c" style="left:732.4px;top:443.67px;width:126.6px;color:#000">3/30/2025</div>
<div class="c" style="left:858px;top:442.77px;width:325px;color:#000">Colorful street mural or graffiti wall</div>
<div class="c" style="left:1183px;top:442.77px;width:100px;color:#000">$175</div>
<div class="c" style="left:1283px;top:442.77px;width:110px;color:#000">$0.00</div>
<div class="c" style="left:1393px;top:442.77px;width:105.4px;color:#000">$175</div>
<div class="a" style="left:1543px;top:442.52px;width:17.5px;height:17.5px;border-radius:2.5px;border:2px solid #747474"></div>
<div class="chip" style="left:1616px;top:442.02px;width:133px;height:18.5px;border-radius:9.25px;background:#e8eaed"></div>
<div class="c" style="left:1616px;top:442.77px;width:114px;color:#000">Unpaid</div>
<div class="arr" style="left:1731.5px;top:448.77px;border-top-color:#000;border-left-width:5px;border-right-width:5px;border-top-width:5px"></div>
<div class="c" style="left:45px;top:466.89px;width:211.4px;color:#000">Liam Hughes</div>
<div class="c" style="left:256.4px;top:466.89px;width:183.6px;color:#000">sampleemail@gmail.com</div>
<div class="c" style="left:440px;top:466.89px;width:130.5px;color:#000">123-456-7895</div>
<div class="chip" style="left:581px;top:466.64px;width:140px;background:#e3d0f0"></div>
<div class="c" style="left:581px;top:466.89px;width:122px;color:#5a3a8c">Family</div>
<div class="arr" style="left:704px;top:472.89px;border-top-color:#5a3a8c;border-left-width:5px;border-right-width:5px;border-top-width:5px"></div>
<div class="c" style="left:732.4px;top:467.79px;width:126.6px;color:#000">4/8/2025</div>
<div class="c" style="left:858px;top:466.89px;width:325px;color:#000">Beach during golden hour</div>
<div class="c" style="left:1183px;top:466.89px;width:100px;color:#000">$200</div>
<div class="c" style="left:1283px;top:466.89px;width:110px;color:#000">$100.00</div>
<div class="c" style="left:1393px;top:466.89px;width:105.4px;color:#000">$100</div>
<div class="a" style="left:1543px;top:466.64px;width:17.5px;height:17.5px;border-radius:2.5px;border:2px solid #747474"></div>
<div class="chip" style="left:1616px;top:466.14px;width:133px;height:18.5px;border-radius:9.25px;background:#e8eaed"></div>
<div class="c" style="left:1616px;top:466.89px;width:114px;color:#000">Deposit Only</div>
<div class="arr" style="left:1731.5px;top:472.89px;border-top-color:#000;border-left-width:5px;border-right-width:5px;border-top-width:5px"></div>
<div class="c" style="left:45px;top:491px;width:211.4px;color:#000">Sophia Ramirez</div>
<div class="c" style="left:256.4px;top:491px;width:183.6px;color:#000">sampleemail@gmail.com</div>
<div class="c" style="left:440px;top:491px;width:130.5px;color:#000">123-456-7896</div>
<div class="chip" style="left:581px;top:490.75px;width:140px;background:#c2ddf4"></div>
<div class="c" style="left:581px;top:491px;width:122px;color:#2160ad">Graduation</div>
<div class="arr" style="left:704px;top:497px;border-top-color:#2160ad;border-left-width:5px;border-right-width:5px;border-top-width:5px"></div>
<div class="c" style="left:732.4px;top:491.9px;width:126.6px;color:#000">4/22/2025</div>
<div class="c" style="left:858px;top:491px;width:325px;color:#000">Industrial warehouse</div>
<div class="c" style="left:1183px;top:491px;width:100px;color:#000">$225</div>
<div class="c" style="left:1283px;top:491px;width:110px;color:#000">$112.50</div>
<div class="c" style="left:1393px;top:491px;width:105.4px;color:#000">$113</div>
<div class="a" style="left:1543px;top:490.75px;width:17.5px;height:17.5px;border-radius:2.5px;border:2px solid #747474"></div>
<div class="chip" style="left:1616px;top:490.25px;width:133px;height:18.5px;border-radius:9.25px;background:#e8eaed"></div>
<div class="c" style="left:1616px;top:491px;width:114px;color:#000">Deposit Only</div>
<div class="arr" style="left:1731.5px;top:497px;border-top-color:#000;border-left-width:5px;border-right-width:5px;border-top-width:5px"></div>
<div class="c" style="left:45px;top:515.12px;width:211.4px;color:#000">Jackson Lee</div>
<div class="c" style="left:256.4px;top:515.12px;width:183.6px;color:#000">sampleemail@gmail.com</div>
<div class="c" style="left:440px;top:515.12px;width:130.5px;color:#000">123-456-7897</div>
<div class="chip" style="left:581px;top:514.87px;width:140px;background:#e3d0f0"></div>
<div class="c" style="left:581px;top:515.12px;width:122px;color:#5a3a8c">Family</div>
<div class="arr" style="left:704px;top:521.12px;border-top-color:#5a3a8c;border-left-width:5px;border-right-width:5px;border-top-width:5px"></div>
<div class="c" style="left:732.4px;top:516.02px;width:126.6px;color:#000">5/1/2025</div>
<div class="c" style="left:858px;top:515.12px;width:325px;color:#000">Library or bookstore</div>
<div class="c" style="left:1183px;top:515.12px;width:100px;color:#000">$250</div>
<div class="c" style="left:1283px;top:515.12px;width:110px;color:#000">$125.00</div>
<div class="c" style="left:1393px;top:515.12px;width:105.4px;color:#000">$125</div>
<div class="a" style="left:1543px;top:514.87px;width:17.5px;height:17.5px;border-radius:2.5px;border:2px solid #747474"></div>
<div class="chip" style="left:1616px;top:514.37px;width:133px;height:18.5px;border-radius:9.25px;background:#e8eaed"></div>
<div class="c" style="left:1616px;top:515.12px;width:114px;color:#000">Deposit Only</div>
<div class="arr" style="left:1731.5px;top:521.12px;border-top-color:#000;border-left-width:5px;border-right-width:5px;border-top-width:5px"></div>
<div class="c" style="left:45px;top:539.24px;width:211.4px;color:#000">Isabella Cooper</div>
<div class="c" style="left:256.4px;top:539.24px;width:183.6px;color:#000">sampleemail@gmail.com</div>
<div class="c" style="left:440px;top:539.24px;width:130.5px;color:#000">123-456-7898</div>
<div class="chip" style="left:581px;top:538.99px;width:140px;background:#c9dbe1"></div>
<div class="c" style="left:581px;top:539.24px;width:122px;color:#285c6b">Portrait</div>
<div class="arr" style="left:704px;top:545.24px;border-top-color:#285c6b;border-left-width:5px;border-right-width:5px;border-top-width:5px"></div>
<div class="c" style="left:732.4px;top:540.14px;width:126.6px;color:#000">5/16/2025</div>
<div class="c" style="left:858px;top:539.24px;width:325px;color:#000">Parking garage rooftop</div>
<div class="c" style="left:1183px;top:539.24px;width:100px;color:#000">$275</div>
<div class="c" style="left:1283px;top:539.24px;width:110px;color:#000">$137.50</div>
<div class="c" style="left:1393px;top:539.24px;width:105.4px;color:#000">$138</div>
<div class="a" style="left:1543px;top:538.99px;width:17.5px;height:17.5px;border-radius:2.5px;border:2px solid #747474"></div>
<div class="chip" style="left:1616px;top:538.49px;width:133px;height:18.5px;border-radius:9.25px;background:#e8eaed"></div>
<div class="c" style="left:1616px;top:539.24px;width:114px;color:#000">Deposit Only</div>
<div class="arr" style="left:1731.5px;top:545.24px;border-top-color:#000;border-left-width:5px;border-right-width:5px;border-top-width:5px"></div>
<div class="c" style="left:45px;top:563.35px;width:211.4px;color:#000">Ethan Brooks</div>
<div class="c" style="left:256.4px;top:563.35px;width:183.6px;color:#000">sampleemail@gmail.com</div>
<div class="c" style="left:440px;top:563.35px;width:130.5px;color:#000">123-456-7899</div>
<div class="chip" style="left:581px;top:563.1px;width:140px;background:#f7c8ad"></div>
<div class="c" style="left:581px;top:563.35px;width:122px;color:#703d15">Newborn</div>
<div class="arr" style="left:704px;top:569.35px;border-top-color:#703d15;border-left-width:5px;border-right-width:5px;border-top-width:5px"></div>
<div class="c" style="left:732.4px;top:564.25px;width:126.6px;color:#000">5/29/2025</div>
<div class="c" style="left:858px;top:563.35px;width:325px;color:#000">Flower field or lavender farm</div>
<div class="c" style="left:1183px;top:563.35px;width:100px;color:#000">$300</div>
<div class="c" style="left:1283px;top:563.35px;width:110px;color:#000">$150.00</div>
<div class="c" style="left:1393px;top:563.35px;width:105.4px;color:#000">$150</div>
<div class="a" style="left:1543px;top:563.1px;width:17.5px;height:17.5px;border-radius:2.5px;border:2px solid #747474"></div>
<div class="chip" style="left:1616px;top:562.6px;width:133px;height:18.5px;border-radius:9.25px;background:#e8eaed"></div>
<div class="c" style="left:1616px;top:563.35px;width:114px;color:#000">Deposit Only</div>
<div class="arr" style="left:1731.5px;top:569.35px;border-top-color:#000;border-left-width:5px;border-right-width:5px;border-top-width:5px"></div>
<div class="c" style="left:45px;top:587.47px;width:211.4px;color:#000">Mia Scott</div>
<div class="c" style="left:256.4px;top:587.47px;width:183.6px;color:#000">sampleemail@gmail.com</div>
<div class="c" style="left:440px;top:587.47px;width:130.5px;color:#000">123-456-7900</div>
<div class="chip" style="left:581px;top:587.22px;width:140px;background:#d8eac0"></div>
<div class="c" style="left:581px;top:587.47px;width:122px;color:#2c7049">Event</div>
<div class="arr" style="left:704px;top:593.47px;border-top-color:#2c7049;border-left-width:5px;border-right-width:5px;border-top-width:5px"></div>
<div class="c" style="left:732.4px;top:588.37px;width:126.6px;color:#000">6/3/2025</div>
<div class="c" style="left:858px;top:587.47px;width:325px;color:#000">Vintage diner or food truck area</div>
<div class="c" style="left:1183px;top:587.47px;width:100px;color:#000">$325</div>
<div class="c" style="left:1283px;top:587.47px;width:110px;color:#000">$162.50</div>
<div class="c" style="left:1393px;top:587.47px;width:105.4px;color:#000">$163</div>
<div class="a" style="left:1543px;top:587.22px;width:17.5px;height:17.5px;border-radius:2.5px;border:2px solid #747474"></div>
<div class="chip" style="left:1616px;top:586.72px;width:133px;height:18.5px;border-radius:9.25px;background:#e8eaed"></div>
<div class="c" style="left:1616px;top:587.47px;width:114px;color:#000">Deposit Only</div>
<div class="arr" style="left:1731.5px;top:593.47px;border-top-color:#000;border-left-width:5px;border-right-width:5px;border-top-width:5px"></div>
<div class="c" style="left:45px;top:611.59px;width:211.4px;color:#000">Benjamin Foster</div>
<div class="c" style="left:256.4px;top:611.59px;width:183.6px;color:#000">sampleemail@gmail.com</div>
<div class="c" style="left:440px;top:611.59px;width:130.5px;color:#000">123-456-7901</div>
<div class="chip" style="left:581px;top:611.34px;width:140px;background:#d8eac0"></div>
<div class="c" style="left:581px;top:611.59px;width:122px;color:#2c7049">Event</div>
<div class="arr" style="left:704px;top:617.59px;border-top-color:#2c7049;border-left-width:5px;border-right-width:5px;border-top-width:5px"></div>
<div class="c" style="left:732.4px;top:612.49px;width:126.6px;color:#000">6/18/2025</div>
<div class="c" style="left:858px;top:611.59px;width:325px;color:#000">Urban alley with textured walls</div>
<div class="c" style="left:1183px;top:611.59px;width:100px;color:#000">$350</div>
<div class="c" style="left:1283px;top:611.59px;width:110px;color:#000">$175.00</div>
<div class="c" style="left:1393px;top:611.59px;width:105.4px;color:#000">$175</div>
<div class="a" style="left:1543px;top:611.34px;width:17.5px;height:17.5px;border-radius:2.5px;border:2px solid #747474"></div>
<div class="chip" style="left:1616px;top:610.84px;width:133px;height:18.5px;border-radius:9.25px;background:#e8eaed"></div>
<div class="c" style="left:1616px;top:611.59px;width:114px;color:#000">Deposit Only</div>
<div class="arr" style="left:1731.5px;top:617.59px;border-top-color:#000;border-left-width:5px;border-right-width:5px;border-top-width:5px"></div>
<div class="c" style="left:45px;top:635.7px;width:211.4px;color:#000">Harper Morris</div>
<div class="c" style="left:256.4px;top:635.7px;width:183.6px;color:#000">sampleemail@gmail.com</div>
<div class="c" style="left:440px;top:635.7px;width:130.5px;color:#000">123-456-7902</div>
<div class="chip" style="left:581px;top:635.45px;width:140px;background:#e3d0f0"></div>
<div class="c" style="left:581px;top:635.7px;width:122px;color:#5a3a8c">Family</div>
<div class="arr" style="left:704px;top:641.7px;border-top-color:#5a3a8c;border-left-width:5px;border-right-width:5px;border-top-width:5px"></div>
<div class="c" style="left:732.4px;top:636.6px;width:126.6px;color:#000">6/25/2025</div>
<div class="c" style="left:858px;top:635.7px;width:325px;color:#000">Hiking trail with scenic lookouts</div>
<div class="c" style="left:1183px;top:635.7px;width:100px;color:#000">$375</div>
<div class="c" style="left:1283px;top:635.7px;width:110px;color:#000">$187.50</div>
<div class="c" style="left:1393px;top:635.7px;width:105.4px;color:#000">$188</div>
<div class="a" style="left:1543px;top:635.45px;width:17.5px;height:17.5px;border-radius:2.5px;border:2px solid #747474"></div>
<div class="chip" style="left:1616px;top:634.95px;width:133px;height:18.5px;border-radius:9.25px;background:#e8eaed"></div>
<div class="c" style="left:1616px;top:635.7px;width:114px;color:#000">Deposit Only</div>
<div class="arr" style="left:1731.5px;top:641.7px;border-top-color:#000;border-left-width:5px;border-right-width:5px;border-top-width:5px"></div>
<div class="c" style="left:45px;top:659.82px;width:211.4px;color:#000">Lucas Reed</div>
<div class="c" style="left:256.4px;top:659.82px;width:183.6px;color:#000">sampleemail@gmail.com</div>
<div class="c" style="left:440px;top:659.82px;width:130.5px;color:#000">123-456-7903</div>
<div class="chip" style="left:581px;top:659.57px;width:140px;background:#d8eac0"></div>
<div class="c" style="left:581px;top:659.82px;width:122px;color:#2c7049">Event</div>
<div class="arr" style="left:704px;top:665.82px;border-top-color:#2c7049;border-left-width:5px;border-right-width:5px;border-top-width:5px"></div>
<div class="c" style="left:732.4px;top:660.72px;width:126.6px;color:#000">7/4/2025</div>
<div class="c" style="left:858px;top:659.82px;width:325px;color:#000">Local fair or amusement park</div>
<div class="c" style="left:1183px;top:659.82px;width:100px;color:#000">$400</div>
<div class="c" style="left:1283px;top:659.82px;width:110px;color:#000">$0.00</div>
<div class="c" style="left:1393px;top:659.82px;width:105.4px;color:#000">$400</div>
<div class="a" style="left:1543px;top:659.57px;width:17.5px;height:17.5px;border-radius:2.5px;border:2px solid #747474"></div>
<div class="chip" style="left:1616px;top:659.07px;width:133px;height:18.5px;border-radius:9.25px;background:#e8eaed"></div>
<div class="c" style="left:1616px;top:659.82px;width:114px;color:#000">Unpaid</div>
<div class="arr" style="left:1731.5px;top:665.82px;border-top-color:#000;border-left-width:5px;border-right-width:5px;border-top-width:5px"></div>
<div class="c" style="left:45px;top:683.94px;width:211.4px;color:#000">Amelia Parker</div>
<div class="c" style="left:256.4px;top:683.94px;width:183.6px;color:#000">sampleemail@gmail.com</div>
<div class="c" style="left:440px;top:683.94px;width:130.5px;color:#000">123-456-7904</div>
<div class="chip" style="left:581px;top:683.69px;width:140px;background:#fae4a6"></div>
<div class="c" style="left:581px;top:683.94px;width:122px;color:#4a3a25">Wedding</div>
<div class="arr" style="left:704px;top:689.94px;border-top-color:#4a3a25;border-left-width:5px;border-right-width:5px;border-top-width:5px"></div>
<div class="c" style="left:732.4px;top:684.84px;width:126.6px;color:#000">7/21/2025</div>
<div class="c" style="left:858px;top:683.94px;width:325px;color:#000">Historic downtown area</div>
<div class="c" style="left:1183px;top:683.94px;width:100px;color:#000">$425</div>
<div class="c" style="left:1283px;top:683.94px;width:110px;color:#000">$212.50</div>
<div class="c" style="left:1393px;top:683.94px;width:105.4px;color:#000">$213</div>
<div class="a" style="left:1543px;top:683.69px;width:17.5px;height:17.5px;border-radius:2.5px;background:#757575"></div>
<svg class="ic" style="left:1543px;top:683.69px" width="17.5" height="17.5" viewBox="0 0 18 18"><path d="M2.6 8.6l4.9 4.4 7.6-9.1" fill="none" stroke="#fff" stroke-width="2.2"/></svg>
<div class="chip" style="left:1616px;top:683.19px;width:133px;height:18.5px;border-radius:9.25px;background:#e8eaed"></div>
<div class="c" style="left:1616px;top:683.94px;width:114px;color:#000">Deposit Only</div>
<div class="arr" style="left:1731.5px;top:689.94px;border-top-color:#000;border-left-width:5px;border-right-width:5px;border-top-width:5px"></div>
<div class="c" style="left:45px;top:708.05px;width:211.4px;color:#000">Henry Adams</div>
<div class="c" style="left:256.4px;top:708.05px;width:183.6px;color:#000">sampleemail@gmail.com</div>
<div class="c" style="left:440px;top:708.05px;width:130.5px;color:#000">123-456-7905</div>
<div class="chip" style="left:581px;top:707.8px;width:140px;background:#c9dbe1"></div>
<div class="c" style="left:581px;top:708.05px;width:122px;color:#285c6b">Portrait</div>
<div class="arr" style="left:704px;top:714.05px;border-top-color:#285c6b;border-left-width:5px;border-right-width:5px;border-top-width:5px"></div>
<div class="c" style="left:732.4px;top:708.95px;width:126.6px;color:#000">8/6/2025</div>
<div class="c" style="left:858px;top:708.05px;width:325px;color:#000">Open field with tall grass</div>
<div class="c" style="left:1183px;top:708.05px;width:100px;color:#000">$450</div>
<div class="c" style="left:1283px;top:708.05px;width:110px;color:#000">$225.00</div>
<div class="c" style="left:1393px;top:708.05px;width:105.4px;color:#000">$225</div>
<div class="a" style="left:1543px;top:707.8px;width:17.5px;height:17.5px;border-radius:2.5px;background:#757575"></div>
<svg class="ic" style="left:1543px;top:707.8px" width="17.5" height="17.5" viewBox="0 0 18 18"><path d="M2.6 8.6l4.9 4.4 7.6-9.1" fill="none" stroke="#fff" stroke-width="2.2"/></svg>
<div class="chip" style="left:1616px;top:707.3px;width:133px;height:18.5px;border-radius:9.25px;background:#e8eaed"></div>
<div class="c" style="left:1616px;top:708.05px;width:114px;color:#000">Deposit Only</div>
<div class="arr" style="left:1731.5px;top:714.05px;border-top-color:#000;border-left-width:5px;border-right-width:5px;border-top-width:5px"></div>
<div class="c" style="left:45px;top:732.17px;width:211.4px;color:#000">Charlotte Turner</div>
<div class="c" style="left:256.4px;top:732.17px;width:183.6px;color:#000">sampleemail@gmail.com</div>
<div class="c" style="left:440px;top:732.17px;width:130.5px;color:#000">123-456-7906</div>
<div class="chip" style="left:581px;top:731.92px;width:140px;background:#e3d0f0"></div>
<div class="c" style="left:581px;top:732.17px;width:122px;color:#5a3a8c">Family</div>
<div class="arr" style="left:704px;top:738.17px;border-top-color:#5a3a8c;border-left-width:5px;border-right-width:5px;border-top-width:5px"></div>
<div class="c" style="left:732.4px;top:733.07px;width:126.6px;color:#000">8/15/2025</div>
<div class="c" style="left:858px;top:732.17px;width:325px;color:#000">Art museum courtyard</div>
<div class="c" style="left:1183px;top:732.17px;width:100px;color:#000">$475</div>
<div class="c" style="left:1283px;top:732.17px;width:110px;color:#000">$0.00</div>
<div class="c" style="left:1393px;top:732.17px;width:105.4px;color:#000">$475</div>
<div class="a" style="left:1543px;top:731.92px;width:17.5px;height:17.5px;border-radius:2.5px;border:2px solid #747474"></div>
<div class="chip" style="left:1616px;top:731.42px;width:133px;height:18.5px;border-radius:9.25px;background:#e8eaed"></div>
<div class="c" style="left:1616px;top:732.17px;width:114px;color:#000">Unpaid</div>
<div class="arr" style="left:1731.5px;top:738.17px;border-top-color:#000;border-left-width:5px;border-right-width:5px;border-top-width:5px"></div>
<div class="c" style="left:45px;top:756.29px;width:211.4px;color:#000">Elijah Ross</div>
<div class="c" style="left:256.4px;top:756.29px;width:183.6px;color:#000">sampleemail@gmail.com</div>
<div class="c" style="left:440px;top:756.29px;width:130.5px;color:#000">123-456-7907</div>
<div class="chip" style="left:581px;top:756.04px;width:140px;background:#c2ddf4"></div>
<div class="c" style="left:581px;top:756.29px;width:122px;color:#2160ad">Graduation</div>
<div class="arr" style="left:704px;top:762.29px;border-top-color:#2160ad;border-left-width:5px;border-right-width:5px;border-top-width:5px"></div>
<div class="c" style="left:732.4px;top:757.19px;width:126.6px;color:#000">8/31/2025</div>
<div class="c" style="left:858px;top:756.29px;width:325px;color:#000">Abandoned building (with safety permission)</div>
<div class="c" style="left:1183px;top:756.29px;width:100px;color:#000">$500</div>
<div class="c" style="left:1283px;top:756.29px;width:110px;color:#000">$250.00</div>
<div class="c" style="left:1393px;top:756.29px;width:105.4px;color:#000">$250</div>
<div class="a" style="left:1543px;top:756.04px;width:17.5px;height:17.5px;border-radius:2.5px;background:#757575"></div>
<svg class="ic" style="left:1543px;top:756.04px" width="17.5" height="17.5" viewBox="0 0 18 18"><path d="M2.6 8.6l4.9 4.4 7.6-9.1" fill="none" stroke="#fff" stroke-width="2.2"/></svg>
<div class="chip" style="left:1616px;top:755.54px;width:133px;height:18.5px;border-radius:9.25px;background:#e8eaed"></div>
<div class="c" style="left:1616px;top:756.29px;width:114px;color:#000">Deposit Only</div>
<div class="arr" style="left:1731.5px;top:762.29px;border-top-color:#000;border-left-width:5px;border-right-width:5px;border-top-width:5px"></div>
<div class="c" style="left:45px;top:780.41px;width:211.4px;color:#000">Grace Kelly</div>
<div class="c" style="left:256.4px;top:780.41px;width:183.6px;color:#000">sampleemail@gmail.com</div>
<div class="c" style="left:440px;top:780.41px;width:130.5px;color:#000">123-456-7908</div>
<div class="chip" style="left:581px;top:780.16px;width:140px;background:#f7c8ad"></div>
<div class="c" style="left:581px;top:780.41px;width:122px;color:#703d15">Newborn</div>
<div class="arr" style="left:704px;top:786.41px;border-top-color:#703d15;border-left-width:5px;border-right-width:5px;border-top-width:5px"></div>
<div class="c" style="left:732.4px;top:781.31px;width:126.6px;color:#000">9/7/2025</div>
<div class="c" style="left:858px;top:780.41px;width:325px;color:#000">Ice cream parlor or dessert cafe</div>
<div class="c" style="left:1183px;top:780.41px;width:100px;color:#000">$525</div>
<div class="c" style="left:1283px;top:780.41px;width:110px;color:#000">$262.50</div>
<div class="c" style="left:1393px;top:780.41px;width:105.4px;color:#000">$263</div>
<div class="a" style="left:1543px;top:780.16px;width:17.5px;height:17.5px;border-radius:2.5px;background:#757575"></div>
<svg class="ic" style="left:1543px;top:780.16px" width="17.5" height="17.5" viewBox="0 0 18 18"><path d="M2.6 8.6l4.9 4.4 7.6-9.1" fill="none" stroke="#fff" stroke-width="2.2"/></svg>
<div class="chip" style="left:1616px;top:779.66px;width:133px;height:18.5px;border-radius:9.25px;background:#e8eaed"></div>
<div class="c" style="left:1616px;top:780.41px;width:114px;color:#000">Deposit Only</div>
<div class="arr" style="left:1731.5px;top:786.41px;border-top-color:#000;border-left-width:5px;border-right-width:5px;border-top-width:5px"></div>
<div class="c" style="left:45px;top:804.52px;width:211.4px;color:#000">Mason Clark</div>
<div class="c" style="left:256.4px;top:804.52px;width:183.6px;color:#000">sampleemail@gmail.com</div>
<div class="c" style="left:440px;top:804.52px;width:130.5px;color:#000">123-456-7909</div>
<div class="chip" style="left:581px;top:804.27px;width:140px;background:#d8eac0"></div>
<div class="c" style="left:581px;top:804.52px;width:122px;color:#2c7049">Event</div>
<div class="arr" style="left:704px;top:810.52px;border-top-color:#2c7049;border-left-width:5px;border-right-width:5px;border-top-width:5px"></div>
<div class="c" style="left:732.4px;top:805.42px;width:126.6px;color:#000">9/26/2025</div>
<div class="c" style="left:858px;top:804.52px;width:325px;color:#000">Greenhouse or plant nursery</div>
<div class="c" style="left:1183px;top:804.52px;width:100px;color:#000">$550</div>
<div class="c" style="left:1283px;top:804.52px;width:110px;color:#000">$275.00</div>
<div class="c" style="left:1393px;top:804.52px;width:105.4px;color:#000">$275</div>
<div class="a" style="left:1543px;top:804.27px;width:17.5px;height:17.5px;border-radius:2.5px;border:2px solid #747474"></div>
<div class="chip" style="left:1616px;top:803.77px;width:133px;height:18.5px;border-radius:9.25px;background:#e8eaed"></div>
<div class="c" style="left:1616px;top:804.52px;width:114px;color:#000">Deposit Only</div>
<div class="arr" style="left:1731.5px;top:810.52px;border-top-color:#000;border-left-width:5px;border-right-width:5px;border-top-width:5px"></div>
<div class="c" style="left:45px;top:828.64px;width:211.4px;color:#000">Ella Barnes</div>
<div class="c" style="left:256.4px;top:828.64px;width:183.6px;color:#000">sampleemail@gmail.com</div>
<div class="c" style="left:440px;top:828.64px;width:130.5px;color:#000">123-456-7910</div>
<div class="chip" style="left:581px;top:828.39px;width:140px;background:#c9dbe1"></div>
<div class="c" style="left:581px;top:828.64px;width:122px;color:#285c6b">Portrait</div>
<div class="arr" style="left:704px;top:834.64px;border-top-color:#285c6b;border-left-width:5px;border-right-width:5px;border-top-width:5px"></div>
<div class="c" style="left:732.4px;top:829.54px;width:126.6px;color:#000">10/10/2025</div>
<div class="c" style="left:858px;top:828.64px;width:325px;color:#000">Community garden</div>
<div class="c" style="left:1183px;top:828.64px;width:100px;color:#000">$600</div>
<div class="c" style="left:1283px;top:828.64px;width:110px;color:#000">$300.00</div>
<div class="c" style="left:1393px;top:828.64px;width:105.4px;color:#000">$300</div>
<div class="a" style="left:1543px;top:828.39px;width:17.5px;height:17.5px;border-radius:2.5px;border:2px solid #747474"></div>
<div class="chip" style="left:1616px;top:827.89px;width:133px;height:18.5px;border-radius:9.25px;background:#e8eaed"></div>
<div class="c" style="left:1616px;top:828.64px;width:114px;color:#000">Deposit Only</div>
<div class="arr" style="left:1731.5px;top:834.64px;border-top-color:#000;border-left-width:5px;border-right-width:5px;border-top-width:5px"></div>
<div class="c" style="left:45px;top:852.76px;width:211.4px;color:#000">Logan Gray</div>
<div class="c" style="left:256.4px;top:852.76px;width:183.6px;color:#000">sampleemail@gmail.com</div>
<div class="c" style="left:440px;top:852.76px;width:130.5px;color:#000">123-456-7911</div>
<div class="chip" style="left:581px;top:852.51px;width:140px;background:#c2ddf4"></div>
<div class="c" style="left:581px;top:852.76px;width:122px;color:#2160ad">Graduation</div>
<div class="arr" style="left:704px;top:858.76px;border-top-color:#2160ad;border-left-width:5px;border-right-width:5px;border-top-width:5px"></div>
<div class="c" style="left:732.4px;top:853.66px;width:126.6px;color:#000">10/23/2025</div>
<div class="c" style="left:858px;top:852.76px;width:325px;color:#000">Minimalist studio with natural light</div>
<div class="c" style="left:1183px;top:852.76px;width:100px;color:#000">$650</div>
<div class="c" style="left:1283px;top:852.76px;width:110px;color:#000">$325.00</div>
<div class="c" style="left:1393px;top:852.76px;width:105.4px;color:#000">$325</div>
<div class="a" style="left:1543px;top:852.51px;width:17.5px;height:17.5px;border-radius:2.5px;background:#757575"></div>
<svg class="ic" style="left:1543px;top:852.51px" width="17.5" height="17.5" viewBox="0 0 18 18"><path d="M2.6 8.6l4.9 4.4 7.6-9.1" fill="none" stroke="#fff" stroke-width="2.2"/></svg>
<div class="chip" style="left:1616px;top:852.01px;width:133px;height:18.5px;border-radius:9.25px;background:#e8eaed"></div>
<div class="c" style="left:1616px;top:852.76px;width:114px;color:#000">Deposit Only</div>
<div class="arr" style="left:1731.5px;top:858.76px;border-top-color:#000;border-left-width:5px;border-right-width:5px;border-top-width:5px"></div>
<div class="c" style="left:45px;top:876.87px;width:211.4px;color:#000">Abigail Howard</div>
<div class="c" style="left:256.4px;top:876.87px;width:183.6px;color:#000">sampleemail@gmail.com</div>
<div class="c" style="left:440px;top:876.87px;width:130.5px;color:#000">123-456-7912</div>
<div class="chip" style="left:581px;top:876.62px;width:140px;background:#e3d0f0"></div>
<div class="c" style="left:581px;top:876.87px;width:122px;color:#5a3a8c">Family</div>
<div class="arr" style="left:704px;top:882.87px;border-top-color:#5a3a8c;border-left-width:5px;border-right-width:5px;border-top-width:5px"></div>
<div class="c" style="left:732.4px;top:877.77px;width:126.6px;color:#000">11/1/2025</div>
<div class="c" style="left:858px;top:876.87px;width:325px;color:#000">Lakefront pier or dock</div>
<div class="c" style="left:1183px;top:876.87px;width:100px;color:#000">$700</div>
<div class="c" style="left:1283px;top:876.87px;width:110px;color:#000">$350.00</div>
<div class="c" style="left:1393px;top:876.87px;width:105.4px;color:#000">$350</div>
<div class="a" style="left:1543px;top:876.62px;width:17.5px;height:17.5px;border-radius:2.5px;border:2px solid #747474"></div>
<div class="chip" style="left:1616px;top:876.12px;width:133px;height:18.5px;border-radius:9.25px;background:#e8eaed"></div>
<div class="c" style="left:1616px;top:876.87px;width:114px;color:#000">Deposit Only</div>
<div class="arr" style="left:1731.5px;top:882.87px;border-top-color:#000;border-left-width:5px;border-right-width:5px;border-top-width:5px"></div>
<div class="c" style="left:45px;top:900.99px;width:211.4px;color:#000">Sebastian Ward</div>
<div class="c" style="left:256.4px;top:900.99px;width:183.6px;color:#000">sampleemail@gmail.com</div>
<div class="c" style="left:440px;top:900.99px;width:130.5px;color:#000">123-456-7913</div>
<div class="chip" style="left:581px;top:900.74px;width:140px;background:#c9dbe1"></div>
<div class="c" style="left:581px;top:900.99px;width:122px;color:#285c6b">Portrait</div>
<div class="arr" style="left:704px;top:906.99px;border-top-color:#285c6b;border-left-width:5px;border-right-width:5px;border-top-width:5px"></div>
<div class="c" style="left:732.4px;top:901.89px;width:126.6px;color:#000">11/13/2025</div>
<div class="c" style="left:858px;top:900.99px;width:325px;color:#000">Forest path with tall trees</div>
<div class="c" style="left:1183px;top:900.99px;width:100px;color:#000">$750</div>
<div class="c" style="left:1283px;top:900.99px;width:110px;color:#000">$375.00</div>
<div class="c" style="left:1393px;top:900.99px;width:105.4px;color:#000">$375</div>
<div class="a" style="left:1543px;top:900.74px;width:17.5px;height:17.5px;border-radius:2.5px;border:2px solid #747474"></div>
<div class="chip" style="left:1616px;top:900.24px;width:133px;height:18.5px;border-radius:9.25px;background:#e8eaed"></div>
<div class="c" style="left:1616px;top:900.99px;width:114px;color:#000">Deposit Only</div>
<div class="arr" style="left:1731.5px;top:906.99px;border-top-color:#000;border-left-width:5px;border-right-width:5px;border-top-width:5px"></div>
<div class="c" style="left:45px;top:925.11px;width:211.4px;color:#000">Lily Green</div>
<div class="c" style="left:256.4px;top:925.11px;width:183.6px;color:#000">sampleemail@gmail.com</div>
<div class="c" style="left:440px;top:925.11px;width:130.5px;color:#000">123-456-7914</div>
<div class="chip" style="left:581px;top:924.86px;width:140px;background:#d8eac0"></div>
<div class="c" style="left:581px;top:925.11px;width:122px;color:#2c7049">Event</div>
<div class="arr" style="left:704px;top:931.11px;border-top-color:#2c7049;border-left-width:5px;border-right-width:5px;border-top-width:5px"></div>
<div class="c" style="left:732.4px;top:926.01px;width:126.6px;color:#000">11/28/2025</div>
<div class="c" style="left:858px;top:925.11px;width:325px;color:#000">Antique or thrift store</div>
<div class="c" style="left:1183px;top:925.11px;width:100px;color:#000">$800</div>
<div class="c" style="left:1283px;top:925.11px;width:110px;color:#000">$400.00</div>
<div class="c" style="left:1393px;top:925.11px;width:105.4px;color:#000">$400</div>
<div class="a" style="left:1543px;top:924.86px;width:17.5px;height:17.5px;border-radius:2.5px;border:2px solid #747474"></div>
<div class="chip" style="left:1616px;top:924.36px;width:133px;height:18.5px;border-radius:9.25px;background:#e8eaed"></div>
<div class="c" style="left:1616px;top:925.11px;width:114px;color:#000">Deposit Only</div>
<div class="arr" style="left:1731.5px;top:931.11px;border-top-color:#000;border-left-width:5px;border-right-width:5px;border-top-width:5px"></div>
<div class="c" style="left:45px;top:949.23px;width:211.4px;color:#000">Daniel Phillips</div>
<div class="c" style="left:256.4px;top:949.23px;width:183.6px;color:#000">sampleemail@gmail.com</div>
<div class="c" style="left:440px;top:949.23px;width:130.5px;color:#000">123-456-7915</div>
<div class="chip" style="left:581px;top:948.98px;width:140px;background:#fae4a6"></div>
<div class="c" style="left:581px;top:949.23px;width:122px;color:#4a3a25">Wedding</div>
<div class="arr" style="left:704px;top:955.23px;border-top-color:#4a3a25;border-left-width:5px;border-right-width:5px;border-top-width:5px"></div>
<div class="c" style="left:732.4px;top:950.12px;width:126.6px;color:#000">12/5/2025</div>
<div class="c" style="left:858px;top:949.23px;width:325px;color:#000">Bridge with unique architecture</div>
<div class="c" style="left:1183px;top:949.23px;width:100px;color:#000">$850</div>
<div class="c" style="left:1283px;top:949.23px;width:110px;color:#000">$425.00</div>
<div class="c" style="left:1393px;top:949.23px;width:105.4px;color:#000">$425</div>
<div class="a" style="left:1543px;top:948.98px;width:17.5px;height:17.5px;border-radius:2.5px;background:#757575"></div>
<svg class="ic" style="left:1543px;top:948.98px" width="17.5" height="17.5" viewBox="0 0 18 18"><path d="M2.6 8.6l4.9 4.4 7.6-9.1" fill="none" stroke="#fff" stroke-width="2.2"/></svg>
<div class="chip" style="left:1616px;top:948.48px;width:133px;height:18.5px;border-radius:9.25px;background:#e8eaed"></div>
<div class="c" style="left:1616px;top:949.23px;width:114px;color:#000">Deposit Only</div>
<div class="arr" style="left:1731.5px;top:955.23px;border-top-color:#000;border-left-width:5px;border-right-width:5px;border-top-width:5px"></div>
<div class="c" style="left:45px;top:973.34px;width:211.4px;color:#000">Aria Bailey</div>
<div class="c" style="left:256.4px;top:973.34px;width:183.6px;color:#000">sampleemail@gmail.com</div>
<div class="c" style="left:440px;top:973.34px;width:130.5px;color:#000">123-456-7916</div>
<div class="chip" style="left:581px;top:973.09px;width:140px;background:#c9dbe1"></div>
<div class="c" style="left:581px;top:973.34px;width:122px;color:#285c6b">Portrait</div>
<div class="arr" style="left:704px;top:979.34px;border-top-color:#285c6b;border-left-width:5px;border-right-width:5px;border-top-width:5px"></div>
<div class="c" style="left:732.4px;top:974.24px;width:126.6px;color:#000">12/14/2025</div>
<div class="c" style="left:858px;top:973.34px;width:325px;color:#000">Carnival or market street</div>
<div class="c" style="left:1183px;top:973.34px;width:100px;color:#000">$900</div>
<div class="c" style="left:1283px;top:973.34px;width:110px;color:#000">$450.00</div>
<div class="c" style="left:1393px;top:973.34px;width:105.4px;color:#000">$450</div>
<div class="a" style="left:1543px;top:973.09px;width:17.5px;height:17.5px;border-radius:2.5px;border:2px solid #747474"></div>
<div class="chip" style="left:1616px;top:972.59px;width:133px;height:18.5px;border-radius:9.25px;background:#e8eaed"></div>
<div class="c" style="left:1616px;top:973.34px;width:114px;color:#000">Deposit Only</div>
<div class="arr" style="left:1731.5px;top:979.34px;border-top-color:#000;border-left-width:5px;border-right-width:5px;border-top-width:5px"></div>
<div class="c" style="left:45px;top:997.46px;width:211.4px;color:#000">Carter Rivera</div>
<div class="c" style="left:256.4px;top:997.46px;width:183.6px;color:#000">sampleemail@gmail.com</div>
<div class="c" style="left:440px;top:997.46px;width:130.5px;color:#000">123-456-7917</div>
<div class="chip" style="left:581px;top:997.21px;width:140px;background:#e3d0f0"></div>
<div class="c" style="left:581px;top:997.46px;width:122px;color:#5a3a8c">Family</div>
<div class="arr" style="left:704px;top:1003.46px;border-top-color:#5a3a8c;border-left-width:5px;border-right-width:5px;border-top-width:5px"></div>
<div class="c" style="left:732.4px;top:998.36px;width:126.6px;color:#000">12/20/2025</div>
<div class="c" style="left:858px;top:997.46px;width:325px;color:#000">Countryside barn</div>
<div class="c" style="left:1183px;top:997.46px;width:100px;color:#000">$950</div>
<div class="c" style="left:1283px;top:997.46px;width:110px;color:#000">$475.00</div>
<div class="c" style="left:1393px;top:997.46px;width:105.4px;color:#000">$475</div>
<div class="a" style="left:1543px;top:997.21px;width:17.5px;height:17.5px;border-radius:2.5px;border:2px solid #747474"></div>
<div class="chip" style="left:1616px;top:996.71px;width:133px;height:18.5px;border-radius:9.25px;background:#e8eaed"></div>
<div class="c" style="left:1616px;top:997.46px;width:114px;color:#000">Deposit Only</div>
<div class="arr" style="left:1731.5px;top:1003.46px;border-top-color:#000;border-left-width:5px;border-right-width:5px;border-top-width:5px"></div>
<div class="c" style="left:45px;top:1021.58px;width:211.4px;color:#000">Zoey Simmons</div>
<div class="c" style="left:256.4px;top:1021.58px;width:183.6px;color:#000">sampleemail@gmail.com</div>
<div class="c" style="left:440px;top:1021.58px;width:130.5px;color:#000">123-456-7918</div>
<div class="chip" style="left:581px;top:1021.33px;width:140px;background:#c2ddf4"></div>
<div class="c" style="left:581px;top:1021.58px;width:122px;color:#2160ad">Graduation</div>
<div class="arr" style="left:704px;top:1027.58px;border-top-color:#2160ad;border-left-width:5px;border-right-width:5px;border-top-width:5px"></div>
<div class="c" style="left:732.4px;top:1022.48px;width:126.6px;color:#000">12/29/2025</div>
<div class="c" style="left:858px;top:1021.58px;width:325px;color:#000">College campus with old buildings</div>
<div class="c" style="left:1183px;top:1021.58px;width:100px;color:#000">$1,000</div>
<div class="c" style="left:1283px;top:1021.58px;width:110px;color:#000">$500.00</div>
<div class="c" style="left:1393px;top:1021.58px;width:105.4px;color:#000">$500</div>
<div class="a" style="left:1543px;top:1021.33px;width:17.5px;height:17.5px;border-radius:2.5px;border:2px solid #747474"></div>
<div class="chip" style="left:1616px;top:1020.83px;width:133px;height:18.5px;border-radius:9.25px;background:#e8eaed"></div>
<div class="c" style="left:1616px;top:1021.58px;width:114px;color:#000">Deposit Only</div>
<div class="arr" style="left:1731.5px;top:1027.58px;border-top-color:#000;border-left-width:5px;border-right-width:5px;border-top-width:5px"></div>
<div class="c" style="left:45px;top:1045.69px;width:211.4px;color:#000">Leo Murphy</div>
<div class="c" style="left:256.4px;top:1045.69px;width:183.6px;color:#000">sampleemail@gmail.com</div>
<div class="c" style="left:440px;top:1045.69px;width:130.5px;color:#000">123-456-7919</div>
<div class="chip" style="left:581px;top:1045.44px;width:140px;background:#fae4a6"></div>
<div class="c" style="left:581px;top:1045.69px;width:122px;color:#4a3a25">Wedding</div>
<div class="arr" style="left:704px;top:1051.69px;border-top-color:#4a3a25;border-left-width:5px;border-right-width:5px;border-top-width:5px"></div>
<div class="c" style="left:732.4px;top:1046.59px;width:126.6px;color:#000">12/31/2025</div>
<div class="c" style="left:858px;top:1045.69px;width:325px;color:#000">Urban rooftop garden</div>
<div class="c" style="left:1183px;top:1045.69px;width:100px;color:#000">$1,200</div>
<div class="c" style="left:1283px;top:1045.69px;width:110px;color:#000">$600.00</div>
<div class="c" style="left:1393px;top:1045.69px;width:105.4px;color:#000">$600</div>
<div class="a" style="left:1543px;top:1045.44px;width:17.5px;height:17.5px;border-radius:2.5px;border:2px solid #747474"></div>
<div class="chip" style="left:1616px;top:1044.94px;width:133px;height:18.5px;border-radius:9.25px;background:#e8eaed"></div>
<div class="c" style="left:1616px;top:1045.69px;width:114px;color:#000">Deposit Only</div>
<div class="arr" style="left:1731.5px;top:1051.69px;border-top-color:#000;border-left-width:5px;border-right-width:5px;border-top-width:5px"></div>
<svg class="ic" style="left:0;top:0" width="2048" height="400" viewBox="0 0 2048 400"><rect x="1789" y="343.2" width="140" height="23" fill="#fff"/><rect x="1928.3" y="343.2" width="0.8" height="23" fill="#e6e6e6"/><rect x="1791.5" y="344.6" width="46" height="2.3" fill="#6a6a6a"/><rect x="1791.5" y="348.6" width="88" height="1" fill="#c8c8c8"/><rect x="1803.8" y="348.1" width="18.5" height="2.8" fill="#5b8ad6"/><rect x="1804.3" y="351.9" width="46.5" height="2.2" fill="#c9d7ee"/><rect x="1804.3" y="354.8" width="46.5" height="0.6" fill="#dddddd"/><rect x="1791.5" y="353.9" width="16.3" height="1.8" fill="#8a8a8a"/><rect x="1791.5" y="357.8" width="134.5" height="1.1" fill="#b5b5b5"/><rect x="1791.5" y="360.9" width="122.5" height="1.1" fill="#bdbdbd"/><rect x="1791.5" y="365.3" width="36" height="0.8" fill="#e0e0e0"/></svg>
<div class="a" style="left:45px;top:1113.8px;width:1999px;height:49.6px;background:#324b1f"></div>
<div class="t" style="left:45px;top:1127px;width:2116px;text-align:center;font-family:'Liberation Serif',serif;font-size:29.5px;color:#fff;-webkit-text-stroke:0.4px #fff">SUMMARY</div>
<div class="a" style="left:45px;top:1162.4px;width:395.5px;height:72.7px;background:#4a712d"></div>
<div class="a" style="left:45px;top:1235.1px;width:395.5px;height:22px;background:#dce8d4"></div>
<div class="t" style="left:45px;top:1187px;width:395px;text-align:center;font-family:'Liberation Serif',serif;font-size:26px;color:#fff;-webkit-text-stroke:0.4px #fff">Total # of Sessions</div>
<div class="a" style="left:450px;top:1171px;width:603px;height:100px;background:#fff;border:1.5px solid #9e9e9e"></div>
<div class="t" style="left:473px;top:1192px;font-size:22.8px;color:#757575">Count of Session Type</div>
<svg class="ic" style="left:0;top:1160px" width="1100" height="100" viewBox="0 1160 1100 100"><clipPath id="pc"><rect x="451.5" y="1172.5" width="600" height="84"/></clipPath><g clip-path="url(#pc)"><path d="M751.60 1229.60A172 172 0 0 0 641.04 1269.84L751.60 1401.60z" fill="#66b6c3"/><path d="M751.60 1229.60A172 172 0 0 1 862.16 1269.84L751.60 1401.60z" fill="#4e86ea"/></g><path d="M472.6 1246H701.8" stroke="#757575" stroke-width="1.3"/><circle cx="701.8" cy="1246" r="1.8" fill="#757575"/></svg>
<div class="t" style="left:472.6px;top:1231.3px;font-size:13.6px;color:#222">Wedding</div>
<div class="t" style="left:472.6px;top:1249px;font-size:13.6px;color:#9e9e9e">10.0%</div>
<div class="t" style="left:963.8px;top:1244px;font-size:13.3px;color:#222">Graduation</div>
<div class="a" style="left:1062px;top:1171px;width:847px;height:100px;background:#fff;border:1.5px solid #9e9e9e"></div>
<div class="t" style="left:1084px;top:1192px;font-size:22.8px;color:#757575">Count of Payment Status</div>
<div class="t" style="left:1092px;top:1230px;font-size:13.5px;color:#222">30</div>
<div class="a" style="left:1112px;top:1235.5px;width:774px;height:1px;background:#e0e0e0"></div>
<div class="a" style="left:0;top:1256.2px;width:2048px;height:17.4px;background:#fff"></div>
<div class="a" style="left:0;top:1256.2px;width:2048px;height:1px;background:#e3e3e3"></div>
<div class="a" style="left:0;top:1256.2px;width:44px;height:17.4px;background:#f8f9fa"></div>
<div class="a" style="left:44px;top:1256.2px;width:1.2px;height:17.4px;background:#dadce0"></div>
<div class="a" style="left:48.4px;top:1259px;width:1012px;height:12.8px;border-radius:6.4px;background:#dadce0"></div>
<div class="a" style="left:2000.3px;top:1257.2px;width:43.6px;height:16.4px;background:#f8f8f8"></div>
<div class="a" style="left:2000.3px;top:1257.2px;width:1px;height:16.4px;background:#e3e3e3"></div>
<div class="a" style="left:2022.9px;top:1257.2px;width:1px;height:16.4px;background:#e3e3e3"></div>
<div class="a" style="left:2044px;top:206px;width:1.2px;height:1067px;background:#dcdcdc"></div>
<svg class="ic" style="left:2000px;top:1257px" width="48" height="17" viewBox="0 0 48 17"><path d="M12.7 4.5v8l-4.5-4z" fill="#8a8a8a"/><path d="M32.3 4.5v8l4.5-4z" fill="#8a8a8a"/></svg>
<div class="a" style="left:0;top:1273.6px;width:2048px;height:9.4px;background:#f9fbfd"></div>
<div class="a" style="left:0;top:1273.6px;width:2048px;height:1.4px;background:#e4e8e4"></div>
<div class="a" style="left:182.6px;top:1276px;width:128.4px;height:7px;background:#e1e9f7"></div>
</body></html>
